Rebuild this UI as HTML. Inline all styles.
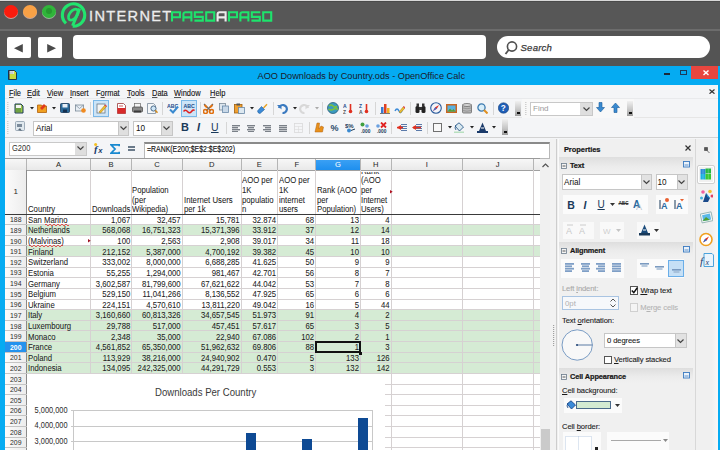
<!DOCTYPE html>
<html><head><meta charset="utf-8">
<style>
*{box-sizing:border-box}
html,body{margin:0;padding:0}
body{width:720px;height:450px;overflow:hidden;position:relative;font-family:"Liberation Sans",sans-serif;background:#fff;color:#1a1a1a}
.a{position:absolute}
#frame{left:0;top:0;width:720px;height:66px;background:#575757}
.tl{position:absolute;width:14px;height:14px;border-radius:50%}
.btn{position:absolute;background:#fff;border-radius:2px}
#blue{left:0;top:65.7px;width:720px;height:384.3px;background:#05abf2}
#app{left:5px;top:85px;width:713px;height:365px;background:#f4f5f7}
.menu{position:absolute;top:87.8px;font-size:9.1px;color:#111;white-space:nowrap;line-height:10px;transform:scaleX(0.82);transform-origin:0 0;-webkit-text-stroke:0.12px #111}
.menu u{text-decoration:underline;text-decoration-color:#555;text-decoration-thickness:0.7px;text-underline-offset:0.6px}
</style></head><body>
<div id="frame" class="a">
  <div class="a" style="left:0;top:0;width:720px;height:1px;background:#d8d8d8"></div>
  <div class="a" style="left:0;top:1px;width:720px;height:1px;background:#4a4a4a"></div>
  <div class="tl" style="left:4px;top:5px;width:14px;height:13px;background:#fb1c0e;box-shadow:0 1px 0 #c9a09a"></div>
  <div class="tl" style="left:23px;top:5px;width:14px;height:13px;background:#f8a146;box-shadow:0 1px 0 #c9a89a"></div>
  <div class="tl" style="left:42px;top:5px;width:14px;height:13px;background:#30b53a;box-shadow:0 1px 0 #9ab89a"></div>
  <div class="tl" style="left:46px;top:8px;width:6px;height:6px;background:#269a30"></div>
  <svg class="a" style="left:56px;top:0px" width="34" height="30" viewBox="0 0 34 30">
    <path d="M10 23.3 A11.2 11.2 0 1 1 16.7 26.2" fill="none" stroke="#22e46e" stroke-width="3.1"/>
    <ellipse cx="17.3" cy="14.6" rx="6.3" ry="3.7" transform="rotate(-52 17.3 14.6)" fill="none" stroke="#22e46e" stroke-width="2.7"/>
    <path d="M23.6 8.6 L16.6 25.8" fill="none" stroke="#22e46e" stroke-width="3"/>
  </svg>
  <div class="a" style="left:89px;top:8px;font-size:14.6px;letter-spacing:1.33px;color:#ececec;-webkit-text-stroke:0.3px;white-space:nowrap;line-height:16px">INTERNET</div>
  <svg class="a" style="left:170.6px;top:10.6px" width="104" height="11" viewBox="0 0 104 10.6"><path transform="translate(0.00 0)" d="M1 10.4 V1 H9 V6 H1" fill="none" stroke="#1ee36c" stroke-width="2.1" stroke-linejoin="miter"/><path transform="translate(11.40 0)" d="M1 10.4 V3 Q1 1 3 1 H9 V10.4 M1 6.2 H9" fill="none" stroke="#1ee36c" stroke-width="2.1" stroke-linejoin="miter"/><path transform="translate(22.80 0)" d="M9.4 1 H1 V5.7 H9 V9.4 H0.6" fill="none" stroke="#1ee36c" stroke-width="2.1" stroke-linejoin="miter"/><path transform="translate(34.20 0)" d="M1 1 H9 V9.4 H1 Z" fill="none" stroke="#1ee36c" stroke-width="2.1" stroke-linejoin="miter"/><path transform="translate(45.60 0)" d="M1 10.4 V3 Q1 1 3 1 H9 V10.4 M1 6.2 H9" fill="none" stroke="#ececec" stroke-width="2.1" stroke-linejoin="miter"/><path transform="translate(57.00 0)" d="M1 10.4 V1 H9 V6 H1" fill="none" stroke="#1ee36c" stroke-width="2.1" stroke-linejoin="miter"/><path transform="translate(68.40 0)" d="M1 10.4 V3 Q1 1 3 1 H9 V10.4 M1 6.2 H9" fill="none" stroke="#1ee36c" stroke-width="2.1" stroke-linejoin="miter"/><path transform="translate(79.80 0)" d="M9.4 1 H1 V5.7 H9 V9.4 H0.6" fill="none" stroke="#1ee36c" stroke-width="2.1" stroke-linejoin="miter"/><path transform="translate(91.20 0)" d="M1 1 H9 V9.4 H1 Z" fill="none" stroke="#1ee36c" stroke-width="2.1" stroke-linejoin="miter"/></svg>
  <div class="a" style="left:0;top:29px;width:720px;height:1.6px;background:#6c6c6c"></div>
  <div class="a" style="left:0;top:31px;width:720px;height:35px;background:#545454"></div>
  <div class="btn" style="left:7px;top:37.4px;width:24.3px;height:21px"></div>
  <svg class="a" style="left:13.5px;top:44px" width="10" height="9"><path d="M0 4.2 L8.8 0 L8.8 8.4 Z" fill="#4a4a4a"/></svg>
  <div class="btn" style="left:37.8px;top:37.4px;width:24.5px;height:21px"></div>
  <svg class="a" style="left:46.7px;top:43.8px" width="10" height="9"><path d="M9 4.2 L0.2 0 L0.2 8.4 Z" fill="#4a4a4a"/></svg>
  <div class="btn" style="left:72.5px;top:35.3px;width:413.3px;height:23.6px;border-radius:4px"></div>
  <div class="btn" style="left:497px;top:36px;width:213px;height:22px;border-radius:11px"></div>
  <svg class="a" style="left:503px;top:40px" width="16" height="16"><circle cx="9" cy="6.5" r="4.6" fill="none" stroke="#505050" stroke-width="1.6"/><path d="M5.8 9.8 L2.5 14" stroke="#505050" stroke-width="1.8"/></svg>
  <div class="a" style="left:520.5px;top:41.5px;font-size:9.6px;font-style:italic;color:#3a3a3a;line-height:12px;-webkit-text-stroke:0.25px #3a3a3a;letter-spacing:0.2px">Search</div>
</div>
<div id="blue" class="a"></div>
<!-- title bar -->
<svg class="a" style="left:8px;top:70px" width="9" height="10" viewBox="0 0 9 10"><path d="M0.5 0.5 H6.5 L8.5 2.5 V9.5 H0.5z" fill="#c8dc40" stroke="#1a2a4a" stroke-width="0.9"/><path d="M1 1 H6 V4 H1z" fill="#f4f4f4"/><path d="M1.5 2h4M1.5 3.2h4" stroke="#8a9aaa" stroke-width="0.6"/><rect x="0.3" y="0.5" width="1.2" height="9" fill="#1a2a4a"/></svg>
<div class="a" style="left:257.5px;top:70px;font-size:9.2px;color:#1a1a2a;white-space:nowrap;line-height:12px">AOO Downloads by Country.ods - OpenOffice Calc</div>
<div class="a" style="left:664px;top:73.4px;width:5.5px;height:1.8px;background:#1a2a3a"></div>
<div class="a" style="left:680px;top:70px;width:7px;height:5.4px;border:1px solid #1a3a5a;border-top-width:1.6px"></div>
<div class="a" style="left:691px;top:66px;width:27px;height:13px;background:#e8463f"></div>
<svg class="a" style="left:702.5px;top:70.3px" width="6" height="5.5"><path d="M0.5 0.5 L5.5 5 M5.5 0.5 L0.5 5" stroke="#fff" stroke-width="1.4"/></svg>
<div id="app" class="a"></div>
<div class="a" style="left:716.5px;top:85px;width:2px;height:365px;background:#f8f8f8"></div>
<div class="a" style="left:718.3px;top:85px;width:1.7px;height:365px;background:#05abf2"></div>
<!-- menu -->
<div class="menu" style="left:9px"><u>F</u>ile</div>
<div class="menu" style="left:27px"><u>E</u>dit</div>
<div class="menu" style="left:47px"><u>V</u>iew</div>
<div class="menu" style="left:70px"><u>I</u>nsert</div>
<div class="menu" style="left:96px">F<u>o</u>rmat</div>
<div class="menu" style="left:127px"><u>T</u>ools</div>
<div class="menu" style="left:152px"><u>D</u>ata</div>
<div class="menu" style="left:174px"><u>W</u>indow</div>
<div class="menu" style="left:210px"><u>H</u>elp</div>
<svg class="a" style="left:708.5px;top:89.3px" width="6" height="5.2"><path d="M0.5 0.5 L5.5 4.7 M5.5 0.5 L0.5 4.7" stroke="#333" stroke-width="1.2"/></svg>
<div class="a" style="left:5px;top:117px;width:713px;height:1px;background:#e6e6e6"></div>
<div class="a" style="left:5px;top:97.6px;width:713px;height:1px;background:#e9eaec"></div>
<div class="a" style="left:5px;top:136.8px;width:713px;height:1.6px;background:#d2d2d2"></div>
<svg class="a" style="left:7px;top:102px" width="2" height="13" viewBox="0 0 2 13"><rect x="0" y="0" width="1.5" height="1" fill="#cfcfcf"/><rect x="0" y="2" width="1.5" height="1" fill="#cfcfcf"/><rect x="0" y="4" width="1.5" height="1" fill="#cfcfcf"/><rect x="0" y="6" width="1.5" height="1" fill="#cfcfcf"/><rect x="0" y="8" width="1.5" height="1" fill="#cfcfcf"/><rect x="0" y="10" width="1.5" height="1" fill="#cfcfcf"/><rect x="0" y="12" width="1.5" height="1" fill="#cfcfcf"/></svg>
<svg class="a" style="left:14px;top:103px" width="10" height="11" viewBox="0 0 10 11"><path d="M1 1h6l2 2v7H1z" fill="#9bc84a" stroke="#1d3a5a" stroke-width="1"/><rect x="2" y="2" width="5" height="3" fill="#f4f4f4"/><path d="M2 6h5M2 8h5" stroke="#2d6a3a" stroke-width="0.8"/></svg>
<svg class="a" style="left:29.5px;top:107px" width="4" height="2.5" viewBox="0 0 4 2.5"><path d="M0 0 L4 0 L2 2.5 Z" fill="#222"/></svg>
<svg class="a" style="left:37px;top:103px" width="10" height="10" viewBox="0 0 10 10"><path d="M0.5 2h4l1 1h4v6.5h-9z" fill="#f0a020" stroke="#b0600a" stroke-width="0.8"/><path d="M3 5l4-4 2 2-4 4z" fill="#e03a1a"/></svg>
<svg class="a" style="left:51.5px;top:107px" width="4" height="2.5" viewBox="0 0 4 2.5"><path d="M0 0 L4 0 L2 2.5 Z" fill="#222"/></svg>
<svg class="a" style="left:60px;top:103px" width="10" height="10" viewBox="0 0 10 10"><rect x="0.5" y="0.5" width="9" height="9" rx="1" fill="#2a6a9a" stroke="#1a3a5a" stroke-width="0.8"/><rect x="2.5" y="1" width="5" height="3.5" fill="#e8f0f8"/><rect x="3" y="6.5" width="4" height="3" fill="#153050"/></svg>
<svg class="a" style="left:75px;top:104px" width="11" height="9" viewBox="0 0 11 9"><rect x="0.5" y="1" width="8" height="6" fill="#e8eef4" stroke="#7a8a9a" stroke-width="0.8"/><path d="M0.5 1 L4.5 4.5 L8.5 1" fill="none" stroke="#7a8a9a" stroke-width="0.7"/><circle cx="8.5" cy="6.5" r="2.3" fill="#f08a20"/></svg>
<div class="a" style="left:90px;top:102px;width:1px;height:13px;background:#d6d6d6"></div>
<div class="a" style="left:93px;top:100px;width:16px;height:17px;background:#cce4f7;border:1px solid #7ab8e8"></div>
<svg class="a" style="left:96px;top:103px" width="11" height="11" viewBox="0 0 11 11"><rect x="1" y="1" width="8" height="9" fill="#f4f4f4" stroke="#6a7a8a" stroke-width="0.8"/><path d="M3 9 L9 2 L10.5 3.5 L4.5 10z" fill="#f0c030" stroke="#a07010" stroke-width="0.5"/><path d="M9 2l1.5 1.5" stroke="#e04060" stroke-width="1.2"/></svg>
<svg class="a" style="left:117px;top:103px" width="9" height="11" viewBox="0 0 9 11"><path d="M0.5 0.5h6l2 2v8h-8z" fill="#fff" stroke="#9a3a3a" stroke-width="0.8"/><rect x="0.5" y="5" width="8" height="5.5" fill="#d82a2a"/><path d="M2 3h4" stroke="#c03030" stroke-width="0.8"/></svg>
<svg class="a" style="left:132px;top:103px" width="11" height="10" viewBox="0 0 11 10"><rect x="2.5" y="0.5" width="6" height="4" fill="#f4f4f4" stroke="#6a6a6a" stroke-width="0.7"/><rect x="0.5" y="4" width="10" height="5" rx="1" fill="#8a8a8a" stroke="#444" stroke-width="0.7"/><rect x="2" y="7.5" width="7" height="2" fill="#3a3a3a"/></svg>
<svg class="a" style="left:147px;top:103px" width="11" height="11" viewBox="0 0 11 11"><path d="M0.5 0.5h6l2 2v8h-8z" fill="#f4f6f8" stroke="#7a8a9a" stroke-width="0.8"/><circle cx="6.5" cy="5.5" r="2.6" fill="#cfe6f7" stroke="#4a6a8a" stroke-width="1"/><path d="M8.3 7.3 L10.5 9.8" stroke="#d08a20" stroke-width="1.6"/></svg>
<div class="a" style="left:162px;top:102px;width:1px;height:13px;background:#d6d6d6"></div>
<svg class="a" style="left:167px;top:103px" width="12" height="11" viewBox="0 0 12 11"><text x="0" y="5" font-size="5.2" font-weight="bold" fill="#1a4a8a" font-family="Liberation Sans">ABC</text><path d="M3 6.5 L6 9.5 L11 3.5" fill="none" stroke="#3a8ad0" stroke-width="2"/></svg>
<div class="a" style="left:181px;top:100px;width:16px;height:17px;background:#cce4f7;border:1px solid #7ab8e8"></div>
<svg class="a" style="left:183px;top:103px" width="12" height="11" viewBox="0 0 12 11"><text x="0.5" y="5" font-size="5.2" font-weight="bold" fill="#1a4a8a" font-family="Liberation Sans">ABC</text><path d="M0.5 8.5 Q2.5 6 4.5 8.5 T8.5 8.5 T11.5 7.5" fill="none" stroke="#e02020" stroke-width="1.5"/></svg>
<div class="a" style="left:200px;top:102px;width:1px;height:13px;background:#d6d6d6"></div>
<svg class="a" style="left:203px;top:103px" width="11" height="11" viewBox="0 0 11 11"><path d="M1 1 L8 8 M10 1 L3 8" stroke="#6a6a6a" stroke-width="1.2"/><circle cx="2.5" cy="8.5" r="2" fill="none" stroke="#e07010" stroke-width="1.6"/><circle cx="8.5" cy="8.5" r="2" fill="none" stroke="#e07010" stroke-width="1.6"/><path d="M4 4.5L1.5 2 M7 4.5 L9.5 2" stroke="#e07010" stroke-width="1.8"/></svg>
<svg class="a" style="left:219px;top:103px" width="10" height="10" viewBox="0 0 10 10"><rect x="0.5" y="0.5" width="6" height="6.5" fill="#dde6ee" stroke="#7a8a9a" stroke-width="0.8"/><rect x="3.5" y="3" width="6" height="6.5" fill="#c8d8e8" stroke="#6a8aaa" stroke-width="0.8"/></svg>
<svg class="a" style="left:234px;top:103px" width="11" height="11" viewBox="0 0 11 11"><rect x="0.5" y="1.5" width="7.5" height="8.5" fill="#f0a030" stroke="#a06010" stroke-width="0.8"/><rect x="2.5" y="0.5" width="3.5" height="2" fill="#555"/><rect x="4.5" y="4.5" width="6" height="6" fill="#dde8f0" stroke="#6a8aaa" stroke-width="0.8"/></svg>
<svg class="a" style="left:249.5px;top:107px" width="4" height="2.5" viewBox="0 0 4 2.5"><path d="M0 0 L4 0 L2 2.5 Z" fill="#222"/></svg>
<svg class="a" style="left:257px;top:103px" width="11" height="11" viewBox="0 0 11 11"><path d="M0.5 8 L4.5 3.5 L7.5 6.5 L3 10.5 Q1 10.5 0.5 8z" fill="#3a8ad8" stroke="#1a5a9a" stroke-width="0.6"/><path d="M6 4.5 L9.5 0.8 L10.5 1.8 L7 5.5z" fill="#e8a020"/></svg>
<div class="a" style="left:273px;top:102px;width:1px;height:13px;background:#d6d6d6"></div>
<svg class="a" style="left:277px;top:103px" width="11" height="11" viewBox="0 0 11 11"><path d="M2 5 A4 4 0 1 1 5.5 10" fill="none" stroke="#3a7ac0" stroke-width="2.2"/><path d="M0 2 L4.5 2 L4.5 6.5z" fill="#3a7ac0"/></svg>
<svg class="a" style="left:292.5px;top:107px" width="4" height="2.5" viewBox="0 0 4 2.5"><path d="M0 0 L4 0 L2 2.5 Z" fill="#222"/></svg>
<svg class="a" style="left:299px;top:103px" width="11" height="11" viewBox="0 0 11 11"><path d="M9 5 A4 4 0 1 0 5.5 10" fill="none" stroke="#d8d8d8" stroke-width="2.2"/><path d="M11 2 L6.5 2 L6.5 6.5z" fill="#d8d8d8"/></svg>
<svg class="a" style="left:314.5px;top:107px" width="4" height="2.5" viewBox="0 0 4 2.5"><path d="M0 0 L4 0 L2 2.5 Z" fill="#aaa"/></svg>
<div class="a" style="left:322px;top:102px;width:1px;height:13px;background:#d6d6d6"></div>
<svg class="a" style="left:327px;top:102px" width="12" height="12" viewBox="0 0 12 12"><circle cx="6" cy="6" r="5.5" fill="#3a9ac0" stroke="#2a5a7a" stroke-width="0.8"/><path d="M2 4 Q4 2 6 4 T10 4 M1.5 7 Q4 9 7 7 T10.5 8" fill="none" stroke="#7ac040" stroke-width="1.6"/></svg>
<svg class="a" style="left:343px;top:103px" width="11" height="11" viewBox="0 0 11 11"><text x="0" y="4.5" font-size="5" font-weight="bold" fill="#1a4a8a" font-family="Liberation Sans">A</text><text x="0" y="10.5" font-size="5" font-weight="bold" fill="#555" font-family="Liberation Sans">Z</text><path d="M7.5 1 V8" stroke="#e03020" stroke-width="1.6"/><circle cx="7.5" cy="8.5" r="1.8" fill="#e03020"/></svg>
<svg class="a" style="left:359px;top:103px" width="11" height="11" viewBox="0 0 11 11"><text x="0" y="4.5" font-size="5" font-weight="bold" fill="#1a4a8a" font-family="Liberation Sans">Z</text><text x="0" y="10.5" font-size="5" font-weight="bold" fill="#555" font-family="Liberation Sans">A</text><path d="M7.5 1 V8" stroke="#e03020" stroke-width="1.6"/><circle cx="7.5" cy="8.5" r="1.8" fill="#e03020"/></svg>
<div class="a" style="left:375px;top:102px;width:1px;height:13px;background:#d6d6d6"></div>
<svg class="a" style="left:380px;top:103px" width="10" height="11" viewBox="0 0 10 11"><rect x="0" y="10" width="10" height="1" fill="#777"/><rect x="1" y="4" width="2.5" height="6" fill="#3a7ad0"/><rect x="4" y="1" width="2.5" height="9" fill="#e04020"/><rect x="7" y="5" width="2.5" height="5" fill="#f0b020"/></svg>
<svg class="a" style="left:394px;top:104px" width="11" height="10" viewBox="0 0 11 10"><path d="M1 7 Q3 3 5 7 T9 4" fill="none" stroke="#3a8ad8" stroke-width="1.4"/><path d="M5 8 L9.5 2.5 L11 4 L6.5 9z" fill="#f0c030" stroke="#b08010" stroke-width="0.5"/><path d="M9.5 2.5 L11 4" stroke="#e04060" stroke-width="1.2"/></svg>
<div class="a" style="left:410px;top:102px;width:1px;height:13px;background:#d6d6d6"></div>
<svg class="a" style="left:415px;top:103px" width="11" height="10" viewBox="0 0 11 10"><rect x="0.5" y="3" width="4" height="7" rx="1.5" fill="#222"/><rect x="6.5" y="3" width="4" height="7" rx="1.5" fill="#222"/><rect x="1.5" y="0.5" width="2.5" height="3" fill="#333"/><rect x="7" y="0.5" width="2.5" height="3" fill="#333"/><rect x="4" y="4" width="3" height="3" fill="#333"/></svg>
<svg class="a" style="left:430px;top:102px" width="12" height="12" viewBox="0 0 12 12"><circle cx="6" cy="6" r="5.3" fill="#f4f4f8" stroke="#2a5a9a" stroke-width="1.1"/><path d="M9 3 L6.8 6.8 L3 9 L5.2 5.2z" fill="#e03020"/><path d="M6.8 6.8 L3 9 L5.2 5.2z" fill="#3a6ad0"/></svg>
<svg class="a" style="left:446px;top:104px" width="11" height="9" viewBox="0 0 11 9"><rect x="0" y="0" width="11" height="9" fill="#c86420"/><rect x="1.5" y="1.5" width="8" height="6" fill="#58b0e0"/><path d="M1.5 7.5 L4 4.5 L6 6.5 L7.5 5 L9.5 7.5z" fill="#58a030"/></svg>
<svg class="a" style="left:462px;top:103px" width="10" height="11" viewBox="0 0 10 11"><rect x="0.5" y="1.5" width="9" height="8.5" rx="1" fill="#b8b8b8" stroke="#6a6a6a" stroke-width="0.8"/><ellipse cx="5" cy="2" rx="4.5" ry="1.5" fill="#d8d8d8" stroke="#6a6a6a" stroke-width="0.8"/><path d="M1 5 Q5 6.5 9 5 M1 7.5 Q5 9 9 7.5" fill="none" stroke="#888" stroke-width="0.7"/></svg>
<svg class="a" style="left:477px;top:103px" width="11" height="11" viewBox="0 0 11 11"><circle cx="4.5" cy="4.5" r="3.6" fill="#d8eefa" stroke="#3a7ab0" stroke-width="1.3"/><path d="M7 7 L10.5 10.5" stroke="#e09020" stroke-width="2"/></svg>
<div class="a" style="left:493px;top:102px;width:1px;height:13px;background:#d6d6d6"></div>
<svg class="a" style="left:498px;top:102px" width="11" height="12" viewBox="0 0 11 12"><circle cx="5.5" cy="6" r="5.2" fill="#1f5fb8" stroke="#14407a" stroke-width="0.6"/><text x="2.7" y="9.2" font-size="8.2" font-weight="bold" fill="#fff" font-family="Liberation Sans">?</text></svg>
<div class="a" style="left:515px;top:101px;width:6px;height:15px;background:linear-gradient(#f0f0f0,#c4c4c4 60%,#9a9a9a)"></div>
<div class="a" style="left:517px;top:112px;width:3px;height:2px;background:#111"></div>
<div class="a" style="left:522px;top:99px;width:112px;height:19px;background:#f8f8f8"></div>
<svg class="a" style="left:525px;top:102px" width="2" height="13" viewBox="0 0 2 13"><rect x="0" y="0" width="1.5" height="1" fill="#cfcfcf"/><rect x="0" y="2" width="1.5" height="1" fill="#cfcfcf"/><rect x="0" y="4" width="1.5" height="1" fill="#cfcfcf"/><rect x="0" y="6" width="1.5" height="1" fill="#cfcfcf"/><rect x="0" y="8" width="1.5" height="1" fill="#cfcfcf"/><rect x="0" y="10" width="1.5" height="1" fill="#cfcfcf"/><rect x="0" y="12" width="1.5" height="1" fill="#cfcfcf"/></svg>
<div class="a" style="left:530px;top:102px;width:63px;height:14px;background:#fff;border:1px solid #c8c8c8"></div>
<div class="a" style="left:580px;top:103px;width:12px;height:12px;background:#dedede"></div>
<svg class="a" style="left:583px;top:107px" width="7" height="5" viewBox="0 0 7 5"><path d="M0.5 0.5 L3.5 3.5 L6.5 0.5" fill="none" stroke="#444" stroke-width="1.2"/></svg>
<div class="a" style="left:533px;top:104px;font-size:8px;color:#9a9a9a;line-height:10px">Find</div>
<svg class="a" style="left:596px;top:102px" width="9" height="11" viewBox="0 0 9 11"><path d="M3 0.5h3v5h2.5L4.5 10 0.5 5.5H3z" fill="#3a8ad0" stroke="#1a5a9a" stroke-width="0.6"/></svg>
<svg class="a" style="left:611px;top:102px" width="9" height="11" viewBox="0 0 9 11"><path d="M3 10.5h3v-5h2.5L4.5 1 0.5 5.5H3z" fill="#3a8ad0" stroke="#1a5a9a" stroke-width="0.6"/></svg>
<div class="a" style="left:627px;top:101px;width:6px;height:15px;background:linear-gradient(#f0f0f0,#c4c4c4 60%,#9a9a9a)"></div>
<div class="a" style="left:629px;top:112px;width:3px;height:2px;background:#111"></div>
<svg class="a" style="left:7px;top:121px" width="2" height="13" viewBox="0 0 2 13"><rect x="0" y="0" width="1.5" height="1" fill="#cfcfcf"/><rect x="0" y="2" width="1.5" height="1" fill="#cfcfcf"/><rect x="0" y="4" width="1.5" height="1" fill="#cfcfcf"/><rect x="0" y="6" width="1.5" height="1" fill="#cfcfcf"/><rect x="0" y="8" width="1.5" height="1" fill="#cfcfcf"/><rect x="0" y="10" width="1.5" height="1" fill="#cfcfcf"/><rect x="0" y="12" width="1.5" height="1" fill="#cfcfcf"/></svg>
<svg class="a" style="left:15px;top:121px" width="10" height="11" viewBox="0 0 10 11"><rect x="0.5" y="0.5" width="9" height="9" rx="1" fill="#e0e8ee" stroke="#8a9aaa" stroke-width="0.8"/><rect x="2" y="3" width="5" height="3" fill="#7a8a9a"/><path d="M3 9 L5 7 L7 10" fill="#5a6a7a"/></svg>
<div class="a" style="left:33px;top:121px;width:96px;height:15px;background:#fff;border:1px solid #c6c6c6"></div>
<div class="a" style="left:118px;top:122px;width:10px;height:13px;background:#dfdfdf;border-left:1px solid #c6c6c6"></div>
<svg class="a" style="left:120px;top:126px" width="7" height="5" viewBox="0 0 7 5"><path d="M0.5 0.5 L3.5 3.5 L6.5 0.5" fill="none" stroke="#444" stroke-width="1.2"/></svg>
<div class="a" style="left:36px;top:123px;font-size:8.2px;color:#111;line-height:11px">Arial</div>
<div class="a" style="left:133px;top:121px;width:40px;height:15px;background:#fff;border:1px solid #c6c6c6"></div>
<div class="a" style="left:161px;top:122px;width:11px;height:13px;background:#dfdfdf;border-left:1px solid #c6c6c6"></div>
<svg class="a" style="left:163px;top:126px" width="7" height="5" viewBox="0 0 7 5"><path d="M0.5 0.5 L3.5 3.5 L6.5 0.5" fill="none" stroke="#444" stroke-width="1.2"/></svg>
<div class="a" style="left:136px;top:123px;font-size:8.2px;color:#111;line-height:11px">10</div>
<div class="a" style="left:181px;top:121px;font-size:11px;font-weight:bold;color:#1a3a5a;line-height:13px">B</div>
<div class="a" style="left:197px;top:121px;font-size:11px;font-style:italic;font-weight:bold;color:#1a3a5a;line-height:13px">I</div>
<div class="a" style="left:211px;top:121px;font-size:10.5px;color:#1a3a5a;line-height:13px;text-decoration:underline">U</div>
<div class="a" style="left:226px;top:122px;width:1px;height:12px;background:#d6d6d6"></div>
<svg class="a" style="left:232px;top:124.5px" width="8" height="7.5" viewBox="0 0 8 7.5"><rect x="0" y="0" width="8" height="1.4" fill="#7a8088"/><rect x="0" y="2" width="6" height="1.4" fill="#7a8088"/><rect x="0" y="4" width="8" height="1.4" fill="#7a8088"/><rect x="0" y="6" width="6" height="1.4" fill="#7a8088"/></svg>
<svg class="a" style="left:247px;top:124.5px" width="8" height="7.5" viewBox="0 0 8 7.5"><rect x="0.0" y="0" width="8" height="1.4" fill="#7a8088"/><rect x="1.0" y="2" width="6" height="1.4" fill="#7a8088"/><rect x="0.0" y="4" width="8" height="1.4" fill="#7a8088"/><rect x="1.0" y="6" width="6" height="1.4" fill="#7a8088"/></svg>
<svg class="a" style="left:263px;top:124.5px" width="8" height="7.5" viewBox="0 0 8 7.5"><rect x="0" y="0" width="8" height="1.4" fill="#7a8088"/><rect x="2" y="2" width="6" height="1.4" fill="#7a8088"/><rect x="0" y="4" width="8" height="1.4" fill="#7a8088"/><rect x="2" y="6" width="6" height="1.4" fill="#7a8088"/></svg>
<svg class="a" style="left:279px;top:124.5px" width="8" height="7.5" viewBox="0 0 8 7.5"><rect x="0" y="0" width="8" height="1.4" fill="#7a8088"/><rect x="0" y="2" width="8" height="1.4" fill="#7a8088"/><rect x="0" y="4" width="8" height="1.4" fill="#7a8088"/><rect x="0" y="6" width="8" height="1.4" fill="#7a8088"/></svg>
<svg class="a" style="left:294px;top:123px" width="9" height="10" viewBox="0 0 9 10"><rect x="0.5" y="0.5" width="8" height="9" fill="none" stroke="#dadada" stroke-width="0.8"/><path d="M0.5 3.5h8M0.5 6.5h8M4.5 3.5v6" stroke="#dadada" stroke-width="0.6"/></svg>
<div class="a" style="left:309px;top:122px;width:1px;height:12px;background:#d6d6d6"></div>
<svg class="a" style="left:314px;top:122px" width="10" height="11" viewBox="0 0 10 11"><path d="M1 10 L3 1 L5.5 1 L5 7 L7 4 L9.5 5 L8.5 10z" fill="#e8901a" stroke="#b06010" stroke-width="0.5"/></svg>
<div class="a" style="left:330.5px;top:122.5px;font-size:9px;font-weight:bold;color:#2a4a6a;line-height:11px">%</div>
<svg class="a" style="left:345px;top:122px" width="11" height="11" viewBox="0 0 11 11"><text x="0" y="5.5" font-size="6" font-weight="bold" fill="#1a3a5a" font-family="Liberation Sans">$%</text><circle cx="4" cy="8.5" r="2" fill="#3a8ad0"/><path d="M6 8.5 L10 7" stroke="#1a3a5a" stroke-width="1"/></svg>
<svg class="a" style="left:360px;top:122px" width="11" height="11" viewBox="0 0 11 11"><circle cx="2.5" cy="2.5" r="2" fill="#40a040"/><circle cx="7" cy="4" r="1.8" fill="#6aa0e0"/><text x="1" y="10.5" font-size="4.8" font-weight="bold" fill="#1a3a5a" font-family="Liberation Sans">.000</text></svg>
<svg class="a" style="left:376px;top:122px" width="11" height="11" viewBox="0 0 11 11"><circle cx="2" cy="4" r="1.8" fill="#6aa0e0"/><path d="M5 0.5 L10 5.5 M10 0.5 L5 5.5" stroke="#e02020" stroke-width="1.8"/><text x="1" y="10.5" font-size="4.8" font-weight="bold" fill="#1a3a5a" font-family="Liberation Sans">.000</text></svg>
<div class="a" style="left:391px;top:122px;width:1px;height:12px;background:#d6d6d6"></div>
<svg class="a" style="left:397px;top:123px" width="10" height="9" viewBox="0 0 10 9"><path d="M4 1.5h6M4 3.5h6M4 5.5h6M4 7.5h6" stroke="#5a7aaa" stroke-width="1"/><path d="M0 4.5 L4 2 L4 7z" fill="#e03020"/><rect x="0" y="3.8" width="6" height="1.6" fill="#e03020"/></svg>
<svg class="a" style="left:412px;top:123px" width="10" height="9" viewBox="0 0 10 9"><path d="M4 1.5h6M4 3.5h6M4 5.5h6M4 7.5h6" stroke="#5a7aaa" stroke-width="1"/><path d="M0 4.5 L4 2 L4 7z" fill="#e03020"/><rect x="1" y="3.8" width="8" height="1.6" fill="#e03020"/></svg>
<div class="a" style="left:427px;top:122px;width:1px;height:12px;background:#d6d6d6"></div>
<svg class="a" style="left:433px;top:123px" width="9" height="9" viewBox="0 0 9 9"><rect x="0.5" y="0.5" width="8" height="8" fill="#f8f8f8" stroke="#707070" stroke-width="1"/></svg>
<svg class="a" style="left:447.5px;top:126px" width="4" height="2.5" viewBox="0 0 4 2.5"><path d="M0 0 L4 0 L2 2.5 Z" fill="#222"/></svg>
<svg class="a" style="left:454px;top:122px" width="11" height="11" viewBox="0 0 11 11"><path d="M1 4 L5 0.8 L9.5 5 L5.5 9z" fill="#d8e8f0" stroke="#2a5a8a" stroke-width="0.9"/><path d="M2 3.5 Q0 6 2 8" fill="none" stroke="#2a5a8a" stroke-width="0.9"/><rect x="0" y="9.5" width="10" height="1.5" fill="#b8e0c0"/></svg>
<svg class="a" style="left:469.5px;top:126px" width="4" height="2.5" viewBox="0 0 4 2.5"><path d="M0 0 L4 0 L2 2.5 Z" fill="#222"/></svg>
<svg class="a" style="left:477px;top:122px" width="11" height="11" viewBox="0 0 11 11"><path d="M2 9 L5.5 0.5 L9 9z" fill="#1a3a6a"/><path d="M4 6h3" stroke="#fff" stroke-width="1"/><rect x="0" y="9" width="11" height="2" fill="#1a3a6a"/></svg>
<svg class="a" style="left:491.5px;top:126px" width="4" height="2.5" viewBox="0 0 4 2.5"><path d="M0 0 L4 0 L2 2.5 Z" fill="#222"/></svg>
<div class="a" style="left:502px;top:119px;width:6px;height:16px;background:linear-gradient(#f0f0f0,#c4c4c4 60%,#9a9a9a)"></div>
<div class="a" style="left:504px;top:131px;width:3px;height:2px;background:#111"></div>
<div class="a" style="left:8.75px;top:141.60px;width:77.75px;height:14.30px;background:#fff;border:1px solid #c9c9c9"></div>
<div class="a" style="left:75.00px;top:142.60px;width:10.50px;height:12.30px;background:#dedede"></div>
<svg class="a" style="left:77px;top:146px" width="7" height="5"><path d="M0.5 0.5 L3.5 3.5 L6.5 0.5" fill="none" stroke="#444" stroke-width="1.2"/></svg>
<div class="a" style="left:11.80px;top:143.90px;white-space:nowrap;font-size:8.2px;color:#333;line-height:10px;transform:scaleX(0.92);transform-origin:0 0">G200</div>
<svg class="a" style="left:93px;top:142px" width="12" height="12" viewBox="0 0 12 12"><circle cx="2.6" cy="2.4" r="1.5" fill="#f4c020"/><text x="1" y="10.8" font-size="10.5" font-style="italic" font-weight="bold" fill="#1a3a6a" font-family="Liberation Serif">f</text><text x="5.3" y="10.8" font-size="7.5" font-style="italic" font-weight="bold" fill="#1a3a6a" font-family="Liberation Sans">x</text></svg>
<svg class="a" style="left:109.5px;top:143.5px" width="10" height="10" viewBox="0 0 10 10"><path d="M9.3 2.2 V0.8 H1 L5 5 L1 9.2 H9.3 V7.8" fill="none" stroke="#1a8ad0" stroke-width="1.8"/></svg>
<div class="a" style="left:127.50px;top:146.20px;width:7.00px;height:1.40px;background:#6a7a8a"></div>
<div class="a" style="left:127.50px;top:149.20px;width:7.00px;height:1.40px;background:#6a7a8a"></div>
<div class="a" style="left:143.75px;top:141.50px;width:406.25px;height:17.00px;background:#fff;border:1px solid #b8b8b8;border-top:2px solid #8a8a8a"></div>
<div class="a" style="left:146.70px;top:144.20px;white-space:nowrap;font-size:8.3px;color:#111;line-height:10px;transform:scaleX(0.835);transform-origin:0 0;-webkit-text-stroke:0.15px #111">=RANK(E200;$E$2:$E$202)</div>
<div class="a" style="left:5.00px;top:158.60px;width:535.00px;height:291.40px;background:#fff"></div>
<div class="a" style="left:5.00px;top:158.60px;width:535.00px;height:11.80px;background:linear-gradient(#f7f7f7,#e9e9e9)"></div>
<div class="a" style="left:5.00px;top:158.00px;width:535.00px;height:0.80px;background:#9a9a9a"></div>
<div class="a" style="left:5.00px;top:169.90px;width:535.00px;height:1.00px;background:#a0a0a0"></div>
<div class="a" style="left:26.60px;top:160.20px;white-space:nowrap;width:63.90px;text-align:center;font-size:7.6px;line-height:9px;color:#2a2a2a;-webkit-text-stroke:0.05px #2a2a2a">A</div>
<div class="a" style="left:90.50px;top:160.20px;white-space:nowrap;width:40.90px;text-align:center;font-size:7.6px;line-height:9px;color:#2a2a2a;-webkit-text-stroke:0.05px #2a2a2a">B</div>
<div class="a" style="left:131.40px;top:160.20px;white-space:nowrap;width:51.30px;text-align:center;font-size:7.6px;line-height:9px;color:#2a2a2a;-webkit-text-stroke:0.05px #2a2a2a">C</div>
<div class="a" style="left:182.70px;top:160.20px;white-space:nowrap;width:58.30px;text-align:center;font-size:7.6px;line-height:9px;color:#2a2a2a;-webkit-text-stroke:0.05px #2a2a2a">D</div>
<div class="a" style="left:241.00px;top:160.20px;white-space:nowrap;width:36.80px;text-align:center;font-size:7.6px;line-height:9px;color:#2a2a2a;-webkit-text-stroke:0.05px #2a2a2a">E</div>
<div class="a" style="left:277.80px;top:160.20px;white-space:nowrap;width:37.80px;text-align:center;font-size:7.6px;line-height:9px;color:#2a2a2a;-webkit-text-stroke:0.05px #2a2a2a">F</div>
<div class="a" style="left:315.60px;top:159.50px;width:44.60px;height:10.60px;background:linear-gradient(#3aa0f4,#1e8fee)"></div>
<div class="a" style="left:315.60px;top:160.20px;white-space:nowrap;width:44.60px;text-align:center;font-size:7.6px;line-height:9px;color:#fff;-webkit-text-stroke:0.05px #fff">G</div>
<div class="a" style="left:360.20px;top:160.20px;white-space:nowrap;width:31.20px;text-align:center;font-size:7.6px;line-height:9px;color:#2a2a2a;-webkit-text-stroke:0.05px #2a2a2a">H</div>
<div class="a" style="left:391.40px;top:160.20px;white-space:nowrap;width:70.80px;text-align:center;font-size:7.6px;line-height:9px;color:#2a2a2a;-webkit-text-stroke:0.05px #2a2a2a">I</div>
<div class="a" style="left:462.20px;top:160.20px;white-space:nowrap;width:71.10px;text-align:center;font-size:7.6px;line-height:9px;color:#2a2a2a;-webkit-text-stroke:0.05px #2a2a2a">J</div>
<div class="a" style="left:5.00px;top:170.40px;width:21.60px;height:279.60px;background:linear-gradient(90deg,#fbfbfb,#ececec)"></div>
<div class="a" style="left:26.10px;top:158.60px;width:1.00px;height:11.80px;background:#b5b5b5"></div>
<div class="a" style="left:90.00px;top:158.60px;width:1.00px;height:11.80px;background:#b5b5b5"></div>
<div class="a" style="left:130.90px;top:158.60px;width:1.00px;height:11.80px;background:#b5b5b5"></div>
<div class="a" style="left:182.20px;top:158.60px;width:1.00px;height:11.80px;background:#b5b5b5"></div>
<div class="a" style="left:240.50px;top:158.60px;width:1.00px;height:11.80px;background:#b5b5b5"></div>
<div class="a" style="left:277.30px;top:158.60px;width:1.00px;height:11.80px;background:#b5b5b5"></div>
<div class="a" style="left:315.10px;top:158.60px;width:1.00px;height:11.80px;background:#b5b5b5"></div>
<div class="a" style="left:359.70px;top:158.60px;width:1.00px;height:11.80px;background:#b5b5b5"></div>
<div class="a" style="left:390.90px;top:158.60px;width:1.00px;height:11.80px;background:#b5b5b5"></div>
<div class="a" style="left:461.70px;top:158.60px;width:1.00px;height:11.80px;background:#b5b5b5"></div>
<div class="a" style="left:532.80px;top:158.60px;width:1.00px;height:11.80px;background:#b5b5b5"></div>
<div class="a" style="left:26.10px;top:170.40px;width:1.00px;height:279.60px;background:#8a8a8a"></div>
<div class="a" style="left:5.00px;top:187.30px;white-space:nowrap;width:21.60px;text-align:center;font-size:8px;line-height:9px;color:#2a2a2a">1</div>
<div class="a" style="left:27.10px;top:224.72px;width:512.90px;height:10.62px;background:#d5ebd4"></div>
<div class="a" style="left:27.10px;top:245.96px;width:512.90px;height:10.62px;background:#d5ebd4"></div>
<div class="a" style="left:27.10px;top:309.68px;width:512.90px;height:10.62px;background:#d5ebd4"></div>
<div class="a" style="left:27.10px;top:320.30px;width:512.90px;height:10.62px;background:#d5ebd4"></div>
<div class="a" style="left:27.10px;top:330.92px;width:512.90px;height:10.62px;background:#d5ebd4"></div>
<div class="a" style="left:27.10px;top:341.54px;width:512.90px;height:10.62px;background:#d5ebd4"></div>
<div class="a" style="left:27.10px;top:352.16px;width:512.90px;height:10.62px;background:#d5ebd4"></div>
<div class="a" style="left:27.10px;top:362.78px;width:512.90px;height:10.62px;background:#d5ebd4"></div>
<div class="a" style="left:26.60px;top:224.22px;width:513.40px;height:1.00px;background:#d6d1d2"></div>
<div class="a" style="left:5.00px;top:224.22px;width:21.60px;height:1.00px;background:#c4c4c4"></div>
<div class="a" style="left:26.60px;top:234.84px;width:513.40px;height:1.00px;background:#d6d1d2"></div>
<div class="a" style="left:5.00px;top:234.84px;width:21.60px;height:1.00px;background:#c4c4c4"></div>
<div class="a" style="left:26.60px;top:245.46px;width:513.40px;height:1.00px;background:#d6d1d2"></div>
<div class="a" style="left:5.00px;top:245.46px;width:21.60px;height:1.00px;background:#c4c4c4"></div>
<div class="a" style="left:26.60px;top:256.08px;width:513.40px;height:1.00px;background:#d6d1d2"></div>
<div class="a" style="left:5.00px;top:256.08px;width:21.60px;height:1.00px;background:#c4c4c4"></div>
<div class="a" style="left:26.60px;top:266.70px;width:513.40px;height:1.00px;background:#d6d1d2"></div>
<div class="a" style="left:5.00px;top:266.70px;width:21.60px;height:1.00px;background:#c4c4c4"></div>
<div class="a" style="left:26.60px;top:277.32px;width:513.40px;height:1.00px;background:#d6d1d2"></div>
<div class="a" style="left:5.00px;top:277.32px;width:21.60px;height:1.00px;background:#c4c4c4"></div>
<div class="a" style="left:26.60px;top:287.94px;width:513.40px;height:1.00px;background:#d6d1d2"></div>
<div class="a" style="left:5.00px;top:287.94px;width:21.60px;height:1.00px;background:#c4c4c4"></div>
<div class="a" style="left:26.60px;top:298.56px;width:513.40px;height:1.00px;background:#d6d1d2"></div>
<div class="a" style="left:5.00px;top:298.56px;width:21.60px;height:1.00px;background:#c4c4c4"></div>
<div class="a" style="left:26.60px;top:309.18px;width:513.40px;height:1.00px;background:#d6d1d2"></div>
<div class="a" style="left:5.00px;top:309.18px;width:21.60px;height:1.00px;background:#c4c4c4"></div>
<div class="a" style="left:26.60px;top:319.80px;width:513.40px;height:1.00px;background:#d6d1d2"></div>
<div class="a" style="left:5.00px;top:319.80px;width:21.60px;height:1.00px;background:#c4c4c4"></div>
<div class="a" style="left:26.60px;top:330.42px;width:513.40px;height:1.00px;background:#d6d1d2"></div>
<div class="a" style="left:5.00px;top:330.42px;width:21.60px;height:1.00px;background:#c4c4c4"></div>
<div class="a" style="left:26.60px;top:341.04px;width:513.40px;height:1.00px;background:#d6d1d2"></div>
<div class="a" style="left:5.00px;top:341.04px;width:21.60px;height:1.00px;background:#c4c4c4"></div>
<div class="a" style="left:26.60px;top:351.66px;width:513.40px;height:1.00px;background:#d6d1d2"></div>
<div class="a" style="left:5.00px;top:351.66px;width:21.60px;height:1.00px;background:#c4c4c4"></div>
<div class="a" style="left:26.60px;top:362.28px;width:513.40px;height:1.00px;background:#d6d1d2"></div>
<div class="a" style="left:5.00px;top:362.28px;width:21.60px;height:1.00px;background:#c4c4c4"></div>
<div class="a" style="left:26.60px;top:372.90px;width:513.40px;height:1.00px;background:#d6d1d2"></div>
<div class="a" style="left:5.00px;top:372.90px;width:21.60px;height:1.00px;background:#c4c4c4"></div>
<div class="a" style="left:26.60px;top:383.52px;width:513.40px;height:1.00px;background:#d6d1d2"></div>
<div class="a" style="left:5.00px;top:383.52px;width:21.60px;height:1.00px;background:#c4c4c4"></div>
<div class="a" style="left:26.60px;top:394.14px;width:513.40px;height:1.00px;background:#d6d1d2"></div>
<div class="a" style="left:5.00px;top:394.14px;width:21.60px;height:1.00px;background:#c4c4c4"></div>
<div class="a" style="left:26.60px;top:404.76px;width:513.40px;height:1.00px;background:#d6d1d2"></div>
<div class="a" style="left:5.00px;top:404.76px;width:21.60px;height:1.00px;background:#c4c4c4"></div>
<div class="a" style="left:26.60px;top:415.38px;width:513.40px;height:1.00px;background:#d6d1d2"></div>
<div class="a" style="left:5.00px;top:415.38px;width:21.60px;height:1.00px;background:#c4c4c4"></div>
<div class="a" style="left:26.60px;top:426.00px;width:513.40px;height:1.00px;background:#d6d1d2"></div>
<div class="a" style="left:5.00px;top:426.00px;width:21.60px;height:1.00px;background:#c4c4c4"></div>
<div class="a" style="left:26.60px;top:436.62px;width:513.40px;height:1.00px;background:#d6d1d2"></div>
<div class="a" style="left:5.00px;top:436.62px;width:21.60px;height:1.00px;background:#c4c4c4"></div>
<div class="a" style="left:26.60px;top:447.24px;width:513.40px;height:1.00px;background:#d6d1d2"></div>
<div class="a" style="left:5.00px;top:447.24px;width:21.60px;height:1.00px;background:#c4c4c4"></div>
<div class="a" style="left:26.60px;top:457.86px;width:513.40px;height:1.00px;background:#d6d1d2"></div>
<div class="a" style="left:5.00px;top:457.86px;width:21.60px;height:1.00px;background:#c4c4c4"></div>
<div class="a" style="left:90.00px;top:170.40px;width:1.00px;height:279.60px;background:#d6d1d2"></div>
<div class="a" style="left:130.90px;top:170.40px;width:1.00px;height:279.60px;background:#d6d1d2"></div>
<div class="a" style="left:182.20px;top:170.40px;width:1.00px;height:279.60px;background:#d6d1d2"></div>
<div class="a" style="left:240.50px;top:170.40px;width:1.00px;height:279.60px;background:#d6d1d2"></div>
<div class="a" style="left:277.30px;top:170.40px;width:1.00px;height:279.60px;background:#d6d1d2"></div>
<div class="a" style="left:315.10px;top:170.40px;width:1.00px;height:279.60px;background:#d6d1d2"></div>
<div class="a" style="left:359.70px;top:170.40px;width:1.00px;height:279.60px;background:#d6d1d2"></div>
<div class="a" style="left:390.90px;top:170.40px;width:1.00px;height:279.60px;background:#d6d1d2"></div>
<div class="a" style="left:461.70px;top:170.40px;width:1.00px;height:279.60px;background:#d6d1d2"></div>
<div class="a" style="left:532.80px;top:170.40px;width:1.00px;height:279.60px;background:#d6d1d2"></div>
<div class="a" style="left:5.00px;top:213.70px;width:535.00px;height:1.80px;background:#3a3a3a"></div>
<div class="a" style="left:0;top:170.40px;width:720px;height:43.30px;overflow:hidden">
<div class="a" style="left:27.60px;top:35.00px;width:67.78px;white-space:nowrap;overflow:hidden;font-size:8.4px;line-height:9.7px;color:#222;-webkit-text-stroke:0.05px #222;transform:scaleX(0.925);transform-origin:0 0">Country</div>
<div class="a" style="left:91.50px;top:35.00px;width:42.92px;white-space:nowrap;overflow:hidden;font-size:8.4px;line-height:9.7px;color:#222;-webkit-text-stroke:0.05px #222;transform:scaleX(0.925);transform-origin:0 0">Downloads</div>
<div class="a" style="left:132.40px;top:15.60px;width:54.16px;white-space:nowrap;overflow:hidden;font-size:8.4px;line-height:9.7px;color:#222;-webkit-text-stroke:0.05px #222;transform:scaleX(0.925);transform-origin:0 0">Population<br>(per<br>Wikipedia)</div>
<div class="a" style="left:183.70px;top:25.30px;width:61.73px;white-space:nowrap;overflow:hidden;font-size:8.4px;line-height:9.7px;color:#222;-webkit-text-stroke:0.05px #222;transform:scaleX(0.925);transform-origin:0 0">Internet Users<br>per 1k</div>
<div class="a" style="left:242.00px;top:5.90px;width:38.49px;white-space:nowrap;overflow:hidden;font-size:8.4px;line-height:9.7px;color:#222;-webkit-text-stroke:0.05px #222;transform:scaleX(0.925);transform-origin:0 0">AOO per<br>1K<br>populatio<br>n</div>
<div class="a" style="left:278.80px;top:5.90px;width:39.57px;white-space:nowrap;overflow:hidden;font-size:8.4px;line-height:9.7px;color:#222;-webkit-text-stroke:0.05px #222;transform:scaleX(0.925);transform-origin:0 0">AOO per<br>1K<br>internet<br>users</div>
<div class="a" style="left:316.60px;top:15.60px;width:46.92px;white-space:nowrap;overflow:hidden;font-size:8.4px;line-height:9.7px;color:#222;-webkit-text-stroke:0.05px #222;transform:scaleX(0.925);transform-origin:0 0">Rank (AOO<br>per<br>Population)</div>
</div>
<div class="a" style="left:0;top:172.2px;width:720px;height:41.50px;overflow:hidden">
<div class="a" style="left:361.20px;top:-5.60px;width:32.43px;white-space:nowrap;overflow:hidden;font-size:8.4px;line-height:9.7px;color:#222;-webkit-text-stroke:0.05px #222;transform:scaleX(0.925);transform-origin:0 0">Rank<br>(AOO<br>per<br>Internet<br>Users)</div>
</div>
<svg class="a" style="left:389.5px;top:190px" width="3" height="4"><path d="M0 0 L2.7 1.7 L0 3.5z" fill="#b01020"/></svg>
<div class="a" style="left:5.00px;top:215.30px;white-space:nowrap;width:21.60px;text-align:center;font-size:8px;line-height:9px;color:#2a2a2a;transform:scaleX(0.86);transform-origin:50% 0;">188</div>
<div class="a" style="left:27.90px;top:215.80px;white-space:nowrap;font-size:8.4px;line-height:9.7px;color:#222;-webkit-text-stroke:0.05px #222;transform:scaleX(0.925);transform-origin:0 0">San Marino</div>
<div class="a" style="left:90.50px;top:215.80px;width:39.30px;text-align:right;white-space:nowrap;font-size:8.4px;line-height:9.7px;color:#222;-webkit-text-stroke:0.05px #222;transform:scaleX(0.925);transform-origin:100% 0">1,067</div>
<div class="a" style="left:131.40px;top:215.80px;width:49.70px;text-align:right;white-space:nowrap;font-size:8.4px;line-height:9.7px;color:#222;-webkit-text-stroke:0.05px #222;transform:scaleX(0.925);transform-origin:100% 0">32,457</div>
<div class="a" style="left:182.70px;top:215.80px;width:56.70px;text-align:right;white-space:nowrap;font-size:8.4px;line-height:9.7px;color:#222;-webkit-text-stroke:0.05px #222;transform:scaleX(0.925);transform-origin:100% 0">15,781</div>
<div class="a" style="left:241.00px;top:215.80px;width:35.20px;text-align:right;white-space:nowrap;font-size:8.4px;line-height:9.7px;color:#222;-webkit-text-stroke:0.05px #222;transform:scaleX(0.925);transform-origin:100% 0">32.874</div>
<div class="a" style="left:277.80px;top:215.80px;width:36.20px;text-align:right;white-space:nowrap;font-size:8.4px;line-height:9.7px;color:#222;-webkit-text-stroke:0.05px #222;transform:scaleX(0.925);transform-origin:100% 0">68</div>
<div class="a" style="left:315.60px;top:215.80px;width:43.00px;text-align:right;white-space:nowrap;font-size:8.4px;line-height:9.7px;color:#222;-webkit-text-stroke:0.05px #222;transform:scaleX(0.925);transform-origin:100% 0">13</div>
<div class="a" style="left:360.20px;top:215.80px;width:29.60px;text-align:right;white-space:nowrap;font-size:8.4px;line-height:9.7px;color:#222;-webkit-text-stroke:0.05px #222;transform:scaleX(0.925);transform-origin:100% 0">4</div>
<div class="a" style="left:5.00px;top:225.92px;white-space:nowrap;width:21.60px;text-align:center;font-size:8px;line-height:9px;color:#2a2a2a;transform:scaleX(0.86);transform-origin:50% 0;">189</div>
<div class="a" style="left:27.90px;top:226.42px;white-space:nowrap;font-size:8.4px;line-height:9.7px;color:#222;-webkit-text-stroke:0.05px #222;transform:scaleX(0.925);transform-origin:0 0">Netherlands</div>
<div class="a" style="left:90.50px;top:226.42px;width:39.30px;text-align:right;white-space:nowrap;font-size:8.4px;line-height:9.7px;color:#222;-webkit-text-stroke:0.05px #222;transform:scaleX(0.925);transform-origin:100% 0">568,068</div>
<div class="a" style="left:131.40px;top:226.42px;width:49.70px;text-align:right;white-space:nowrap;font-size:8.4px;line-height:9.7px;color:#222;-webkit-text-stroke:0.05px #222;transform:scaleX(0.925);transform-origin:100% 0">16,751,323</div>
<div class="a" style="left:182.70px;top:226.42px;width:56.70px;text-align:right;white-space:nowrap;font-size:8.4px;line-height:9.7px;color:#222;-webkit-text-stroke:0.05px #222;transform:scaleX(0.925);transform-origin:100% 0">15,371,396</div>
<div class="a" style="left:241.00px;top:226.42px;width:35.20px;text-align:right;white-space:nowrap;font-size:8.4px;line-height:9.7px;color:#222;-webkit-text-stroke:0.05px #222;transform:scaleX(0.925);transform-origin:100% 0">33.912</div>
<div class="a" style="left:277.80px;top:226.42px;width:36.20px;text-align:right;white-space:nowrap;font-size:8.4px;line-height:9.7px;color:#222;-webkit-text-stroke:0.05px #222;transform:scaleX(0.925);transform-origin:100% 0">37</div>
<div class="a" style="left:315.60px;top:226.42px;width:43.00px;text-align:right;white-space:nowrap;font-size:8.4px;line-height:9.7px;color:#222;-webkit-text-stroke:0.05px #222;transform:scaleX(0.925);transform-origin:100% 0">12</div>
<div class="a" style="left:360.20px;top:226.42px;width:29.60px;text-align:right;white-space:nowrap;font-size:8.4px;line-height:9.7px;color:#222;-webkit-text-stroke:0.05px #222;transform:scaleX(0.925);transform-origin:100% 0">14</div>
<div class="a" style="left:5.00px;top:236.54px;white-space:nowrap;width:21.60px;text-align:center;font-size:8px;line-height:9px;color:#2a2a2a;transform:scaleX(0.86);transform-origin:50% 0;">190</div>
<div class="a" style="left:27.90px;top:237.04px;white-space:nowrap;font-size:8.4px;line-height:9.7px;color:#222;-webkit-text-stroke:0.05px #222;transform:scaleX(0.925);transform-origin:0 0">(Malvinas)</div>
<div class="a" style="left:90.50px;top:237.04px;width:39.30px;text-align:right;white-space:nowrap;font-size:8.4px;line-height:9.7px;color:#222;-webkit-text-stroke:0.05px #222;transform:scaleX(0.925);transform-origin:100% 0">100</div>
<div class="a" style="left:131.40px;top:237.04px;width:49.70px;text-align:right;white-space:nowrap;font-size:8.4px;line-height:9.7px;color:#222;-webkit-text-stroke:0.05px #222;transform:scaleX(0.925);transform-origin:100% 0">2,563</div>
<div class="a" style="left:182.70px;top:237.04px;width:56.70px;text-align:right;white-space:nowrap;font-size:8.4px;line-height:9.7px;color:#222;-webkit-text-stroke:0.05px #222;transform:scaleX(0.925);transform-origin:100% 0">2,908</div>
<div class="a" style="left:241.00px;top:237.04px;width:35.20px;text-align:right;white-space:nowrap;font-size:8.4px;line-height:9.7px;color:#222;-webkit-text-stroke:0.05px #222;transform:scaleX(0.925);transform-origin:100% 0">39.017</div>
<div class="a" style="left:277.80px;top:237.04px;width:36.20px;text-align:right;white-space:nowrap;font-size:8.4px;line-height:9.7px;color:#222;-webkit-text-stroke:0.05px #222;transform:scaleX(0.925);transform-origin:100% 0">34</div>
<div class="a" style="left:315.60px;top:237.04px;width:43.00px;text-align:right;white-space:nowrap;font-size:8.4px;line-height:9.7px;color:#222;-webkit-text-stroke:0.05px #222;transform:scaleX(0.925);transform-origin:100% 0">11</div>
<div class="a" style="left:360.20px;top:237.04px;width:29.60px;text-align:right;white-space:nowrap;font-size:8.4px;line-height:9.7px;color:#222;-webkit-text-stroke:0.05px #222;transform:scaleX(0.925);transform-origin:100% 0">18</div>
<div class="a" style="left:5.00px;top:247.16px;white-space:nowrap;width:21.60px;text-align:center;font-size:8px;line-height:9px;color:#2a2a2a;transform:scaleX(0.86);transform-origin:50% 0;">191</div>
<div class="a" style="left:27.90px;top:247.66px;white-space:nowrap;font-size:8.4px;line-height:9.7px;color:#222;-webkit-text-stroke:0.05px #222;transform:scaleX(0.925);transform-origin:0 0">Finland</div>
<div class="a" style="left:90.50px;top:247.66px;width:39.30px;text-align:right;white-space:nowrap;font-size:8.4px;line-height:9.7px;color:#222;-webkit-text-stroke:0.05px #222;transform:scaleX(0.925);transform-origin:100% 0">212,152</div>
<div class="a" style="left:131.40px;top:247.66px;width:49.70px;text-align:right;white-space:nowrap;font-size:8.4px;line-height:9.7px;color:#222;-webkit-text-stroke:0.05px #222;transform:scaleX(0.925);transform-origin:100% 0">5,387,000</div>
<div class="a" style="left:182.70px;top:247.66px;width:56.70px;text-align:right;white-space:nowrap;font-size:8.4px;line-height:9.7px;color:#222;-webkit-text-stroke:0.05px #222;transform:scaleX(0.925);transform-origin:100% 0">4,700,192</div>
<div class="a" style="left:241.00px;top:247.66px;width:35.20px;text-align:right;white-space:nowrap;font-size:8.4px;line-height:9.7px;color:#222;-webkit-text-stroke:0.05px #222;transform:scaleX(0.925);transform-origin:100% 0">39.382</div>
<div class="a" style="left:277.80px;top:247.66px;width:36.20px;text-align:right;white-space:nowrap;font-size:8.4px;line-height:9.7px;color:#222;-webkit-text-stroke:0.05px #222;transform:scaleX(0.925);transform-origin:100% 0">45</div>
<div class="a" style="left:315.60px;top:247.66px;width:43.00px;text-align:right;white-space:nowrap;font-size:8.4px;line-height:9.7px;color:#222;-webkit-text-stroke:0.05px #222;transform:scaleX(0.925);transform-origin:100% 0">10</div>
<div class="a" style="left:360.20px;top:247.66px;width:29.60px;text-align:right;white-space:nowrap;font-size:8.4px;line-height:9.7px;color:#222;-webkit-text-stroke:0.05px #222;transform:scaleX(0.925);transform-origin:100% 0">10</div>
<div class="a" style="left:5.00px;top:257.78px;white-space:nowrap;width:21.60px;text-align:center;font-size:8px;line-height:9px;color:#2a2a2a;transform:scaleX(0.86);transform-origin:50% 0;">192</div>
<div class="a" style="left:27.90px;top:258.28px;white-space:nowrap;font-size:8.4px;line-height:9.7px;color:#222;-webkit-text-stroke:0.05px #222;transform:scaleX(0.925);transform-origin:0 0">Switzerland</div>
<div class="a" style="left:90.50px;top:258.28px;width:39.30px;text-align:right;white-space:nowrap;font-size:8.4px;line-height:9.7px;color:#222;-webkit-text-stroke:0.05px #222;transform:scaleX(0.925);transform-origin:100% 0">333,002</div>
<div class="a" style="left:131.40px;top:258.28px;width:49.70px;text-align:right;white-space:nowrap;font-size:8.4px;line-height:9.7px;color:#222;-webkit-text-stroke:0.05px #222;transform:scaleX(0.925);transform-origin:100% 0">8,000,000</div>
<div class="a" style="left:182.70px;top:258.28px;width:56.70px;text-align:right;white-space:nowrap;font-size:8.4px;line-height:9.7px;color:#222;-webkit-text-stroke:0.05px #222;transform:scaleX(0.925);transform-origin:100% 0">6,688,285</div>
<div class="a" style="left:241.00px;top:258.28px;width:35.20px;text-align:right;white-space:nowrap;font-size:8.4px;line-height:9.7px;color:#222;-webkit-text-stroke:0.05px #222;transform:scaleX(0.925);transform-origin:100% 0">41.625</div>
<div class="a" style="left:277.80px;top:258.28px;width:36.20px;text-align:right;white-space:nowrap;font-size:8.4px;line-height:9.7px;color:#222;-webkit-text-stroke:0.05px #222;transform:scaleX(0.925);transform-origin:100% 0">50</div>
<div class="a" style="left:315.60px;top:258.28px;width:43.00px;text-align:right;white-space:nowrap;font-size:8.4px;line-height:9.7px;color:#222;-webkit-text-stroke:0.05px #222;transform:scaleX(0.925);transform-origin:100% 0">9</div>
<div class="a" style="left:360.20px;top:258.28px;width:29.60px;text-align:right;white-space:nowrap;font-size:8.4px;line-height:9.7px;color:#222;-webkit-text-stroke:0.05px #222;transform:scaleX(0.925);transform-origin:100% 0">9</div>
<div class="a" style="left:5.00px;top:268.40px;white-space:nowrap;width:21.60px;text-align:center;font-size:8px;line-height:9px;color:#2a2a2a;transform:scaleX(0.86);transform-origin:50% 0;">193</div>
<div class="a" style="left:27.90px;top:268.90px;white-space:nowrap;font-size:8.4px;line-height:9.7px;color:#222;-webkit-text-stroke:0.05px #222;transform:scaleX(0.925);transform-origin:0 0">Estonia</div>
<div class="a" style="left:90.50px;top:268.90px;width:39.30px;text-align:right;white-space:nowrap;font-size:8.4px;line-height:9.7px;color:#222;-webkit-text-stroke:0.05px #222;transform:scaleX(0.925);transform-origin:100% 0">55,255</div>
<div class="a" style="left:131.40px;top:268.90px;width:49.70px;text-align:right;white-space:nowrap;font-size:8.4px;line-height:9.7px;color:#222;-webkit-text-stroke:0.05px #222;transform:scaleX(0.925);transform-origin:100% 0">1,294,000</div>
<div class="a" style="left:182.70px;top:268.90px;width:56.70px;text-align:right;white-space:nowrap;font-size:8.4px;line-height:9.7px;color:#222;-webkit-text-stroke:0.05px #222;transform:scaleX(0.925);transform-origin:100% 0">981,467</div>
<div class="a" style="left:241.00px;top:268.90px;width:35.20px;text-align:right;white-space:nowrap;font-size:8.4px;line-height:9.7px;color:#222;-webkit-text-stroke:0.05px #222;transform:scaleX(0.925);transform-origin:100% 0">42.701</div>
<div class="a" style="left:277.80px;top:268.90px;width:36.20px;text-align:right;white-space:nowrap;font-size:8.4px;line-height:9.7px;color:#222;-webkit-text-stroke:0.05px #222;transform:scaleX(0.925);transform-origin:100% 0">56</div>
<div class="a" style="left:315.60px;top:268.90px;width:43.00px;text-align:right;white-space:nowrap;font-size:8.4px;line-height:9.7px;color:#222;-webkit-text-stroke:0.05px #222;transform:scaleX(0.925);transform-origin:100% 0">8</div>
<div class="a" style="left:360.20px;top:268.90px;width:29.60px;text-align:right;white-space:nowrap;font-size:8.4px;line-height:9.7px;color:#222;-webkit-text-stroke:0.05px #222;transform:scaleX(0.925);transform-origin:100% 0">7</div>
<div class="a" style="left:5.00px;top:279.02px;white-space:nowrap;width:21.60px;text-align:center;font-size:8px;line-height:9px;color:#2a2a2a;transform:scaleX(0.86);transform-origin:50% 0;">194</div>
<div class="a" style="left:27.90px;top:279.52px;white-space:nowrap;font-size:8.4px;line-height:9.7px;color:#222;-webkit-text-stroke:0.05px #222;transform:scaleX(0.925);transform-origin:0 0">Germany</div>
<div class="a" style="left:90.50px;top:279.52px;width:39.30px;text-align:right;white-space:nowrap;font-size:8.4px;line-height:9.7px;color:#222;-webkit-text-stroke:0.05px #222;transform:scaleX(0.925);transform-origin:100% 0">3,602,587</div>
<div class="a" style="left:131.40px;top:279.52px;width:49.70px;text-align:right;white-space:nowrap;font-size:8.4px;line-height:9.7px;color:#222;-webkit-text-stroke:0.05px #222;transform:scaleX(0.925);transform-origin:100% 0">81,799,600</div>
<div class="a" style="left:182.70px;top:279.52px;width:56.70px;text-align:right;white-space:nowrap;font-size:8.4px;line-height:9.7px;color:#222;-webkit-text-stroke:0.05px #222;transform:scaleX(0.925);transform-origin:100% 0">67,621,622</div>
<div class="a" style="left:241.00px;top:279.52px;width:35.20px;text-align:right;white-space:nowrap;font-size:8.4px;line-height:9.7px;color:#222;-webkit-text-stroke:0.05px #222;transform:scaleX(0.925);transform-origin:100% 0">44.042</div>
<div class="a" style="left:277.80px;top:279.52px;width:36.20px;text-align:right;white-space:nowrap;font-size:8.4px;line-height:9.7px;color:#222;-webkit-text-stroke:0.05px #222;transform:scaleX(0.925);transform-origin:100% 0">53</div>
<div class="a" style="left:315.60px;top:279.52px;width:43.00px;text-align:right;white-space:nowrap;font-size:8.4px;line-height:9.7px;color:#222;-webkit-text-stroke:0.05px #222;transform:scaleX(0.925);transform-origin:100% 0">7</div>
<div class="a" style="left:360.20px;top:279.52px;width:29.60px;text-align:right;white-space:nowrap;font-size:8.4px;line-height:9.7px;color:#222;-webkit-text-stroke:0.05px #222;transform:scaleX(0.925);transform-origin:100% 0">8</div>
<div class="a" style="left:5.00px;top:289.64px;white-space:nowrap;width:21.60px;text-align:center;font-size:8px;line-height:9px;color:#2a2a2a;transform:scaleX(0.86);transform-origin:50% 0;">195</div>
<div class="a" style="left:27.90px;top:290.14px;white-space:nowrap;font-size:8.4px;line-height:9.7px;color:#222;-webkit-text-stroke:0.05px #222;transform:scaleX(0.925);transform-origin:0 0">Belgium</div>
<div class="a" style="left:90.50px;top:290.14px;width:39.30px;text-align:right;white-space:nowrap;font-size:8.4px;line-height:9.7px;color:#222;-webkit-text-stroke:0.05px #222;transform:scaleX(0.925);transform-origin:100% 0">529,150</div>
<div class="a" style="left:131.40px;top:290.14px;width:49.70px;text-align:right;white-space:nowrap;font-size:8.4px;line-height:9.7px;color:#222;-webkit-text-stroke:0.05px #222;transform:scaleX(0.925);transform-origin:100% 0">11,041,266</div>
<div class="a" style="left:182.70px;top:290.14px;width:56.70px;text-align:right;white-space:nowrap;font-size:8.4px;line-height:9.7px;color:#222;-webkit-text-stroke:0.05px #222;transform:scaleX(0.925);transform-origin:100% 0">8,136,552</div>
<div class="a" style="left:241.00px;top:290.14px;width:35.20px;text-align:right;white-space:nowrap;font-size:8.4px;line-height:9.7px;color:#222;-webkit-text-stroke:0.05px #222;transform:scaleX(0.925);transform-origin:100% 0">47.925</div>
<div class="a" style="left:277.80px;top:290.14px;width:36.20px;text-align:right;white-space:nowrap;font-size:8.4px;line-height:9.7px;color:#222;-webkit-text-stroke:0.05px #222;transform:scaleX(0.925);transform-origin:100% 0">65</div>
<div class="a" style="left:315.60px;top:290.14px;width:43.00px;text-align:right;white-space:nowrap;font-size:8.4px;line-height:9.7px;color:#222;-webkit-text-stroke:0.05px #222;transform:scaleX(0.925);transform-origin:100% 0">6</div>
<div class="a" style="left:360.20px;top:290.14px;width:29.60px;text-align:right;white-space:nowrap;font-size:8.4px;line-height:9.7px;color:#222;-webkit-text-stroke:0.05px #222;transform:scaleX(0.925);transform-origin:100% 0">6</div>
<div class="a" style="left:5.00px;top:300.26px;white-space:nowrap;width:21.60px;text-align:center;font-size:8px;line-height:9px;color:#2a2a2a;transform:scaleX(0.86);transform-origin:50% 0;">196</div>
<div class="a" style="left:27.90px;top:300.76px;white-space:nowrap;font-size:8.4px;line-height:9.7px;color:#222;-webkit-text-stroke:0.05px #222;transform:scaleX(0.925);transform-origin:0 0">Ukraine</div>
<div class="a" style="left:90.50px;top:300.76px;width:39.30px;text-align:right;white-space:nowrap;font-size:8.4px;line-height:9.7px;color:#222;-webkit-text-stroke:0.05px #222;transform:scaleX(0.925);transform-origin:100% 0">224,151</div>
<div class="a" style="left:131.40px;top:300.76px;width:49.70px;text-align:right;white-space:nowrap;font-size:8.4px;line-height:9.7px;color:#222;-webkit-text-stroke:0.05px #222;transform:scaleX(0.925);transform-origin:100% 0">4,570,610</div>
<div class="a" style="left:182.70px;top:300.76px;width:56.70px;text-align:right;white-space:nowrap;font-size:8.4px;line-height:9.7px;color:#222;-webkit-text-stroke:0.05px #222;transform:scaleX(0.925);transform-origin:100% 0">13,811,220</div>
<div class="a" style="left:241.00px;top:300.76px;width:35.20px;text-align:right;white-space:nowrap;font-size:8.4px;line-height:9.7px;color:#222;-webkit-text-stroke:0.05px #222;transform:scaleX(0.925);transform-origin:100% 0">49.042</div>
<div class="a" style="left:277.80px;top:300.76px;width:36.20px;text-align:right;white-space:nowrap;font-size:8.4px;line-height:9.7px;color:#222;-webkit-text-stroke:0.05px #222;transform:scaleX(0.925);transform-origin:100% 0">16</div>
<div class="a" style="left:315.60px;top:300.76px;width:43.00px;text-align:right;white-space:nowrap;font-size:8.4px;line-height:9.7px;color:#222;-webkit-text-stroke:0.05px #222;transform:scaleX(0.925);transform-origin:100% 0">5</div>
<div class="a" style="left:360.20px;top:300.76px;width:29.60px;text-align:right;white-space:nowrap;font-size:8.4px;line-height:9.7px;color:#222;-webkit-text-stroke:0.05px #222;transform:scaleX(0.925);transform-origin:100% 0">44</div>
<div class="a" style="left:5.00px;top:310.88px;white-space:nowrap;width:21.60px;text-align:center;font-size:8px;line-height:9px;color:#2a2a2a;transform:scaleX(0.86);transform-origin:50% 0;">197</div>
<div class="a" style="left:27.90px;top:311.38px;white-space:nowrap;font-size:8.4px;line-height:9.7px;color:#222;-webkit-text-stroke:0.05px #222;transform:scaleX(0.925);transform-origin:0 0">Italy</div>
<div class="a" style="left:90.50px;top:311.38px;width:39.30px;text-align:right;white-space:nowrap;font-size:8.4px;line-height:9.7px;color:#222;-webkit-text-stroke:0.05px #222;transform:scaleX(0.925);transform-origin:100% 0">3,160,660</div>
<div class="a" style="left:131.40px;top:311.38px;width:49.70px;text-align:right;white-space:nowrap;font-size:8.4px;line-height:9.7px;color:#222;-webkit-text-stroke:0.05px #222;transform:scaleX(0.925);transform-origin:100% 0">60,813,326</div>
<div class="a" style="left:182.70px;top:311.38px;width:56.70px;text-align:right;white-space:nowrap;font-size:8.4px;line-height:9.7px;color:#222;-webkit-text-stroke:0.05px #222;transform:scaleX(0.925);transform-origin:100% 0">34,657,545</div>
<div class="a" style="left:241.00px;top:311.38px;width:35.20px;text-align:right;white-space:nowrap;font-size:8.4px;line-height:9.7px;color:#222;-webkit-text-stroke:0.05px #222;transform:scaleX(0.925);transform-origin:100% 0">51.973</div>
<div class="a" style="left:277.80px;top:311.38px;width:36.20px;text-align:right;white-space:nowrap;font-size:8.4px;line-height:9.7px;color:#222;-webkit-text-stroke:0.05px #222;transform:scaleX(0.925);transform-origin:100% 0">91</div>
<div class="a" style="left:315.60px;top:311.38px;width:43.00px;text-align:right;white-space:nowrap;font-size:8.4px;line-height:9.7px;color:#222;-webkit-text-stroke:0.05px #222;transform:scaleX(0.925);transform-origin:100% 0">4</div>
<div class="a" style="left:360.20px;top:311.38px;width:29.60px;text-align:right;white-space:nowrap;font-size:8.4px;line-height:9.7px;color:#222;-webkit-text-stroke:0.05px #222;transform:scaleX(0.925);transform-origin:100% 0">2</div>
<div class="a" style="left:5.00px;top:321.50px;white-space:nowrap;width:21.60px;text-align:center;font-size:8px;line-height:9px;color:#2a2a2a;transform:scaleX(0.86);transform-origin:50% 0;">198</div>
<div class="a" style="left:27.90px;top:322.00px;white-space:nowrap;font-size:8.4px;line-height:9.7px;color:#222;-webkit-text-stroke:0.05px #222;transform:scaleX(0.925);transform-origin:0 0">Luxembourg</div>
<div class="a" style="left:90.50px;top:322.00px;width:39.30px;text-align:right;white-space:nowrap;font-size:8.4px;line-height:9.7px;color:#222;-webkit-text-stroke:0.05px #222;transform:scaleX(0.925);transform-origin:100% 0">29,788</div>
<div class="a" style="left:131.40px;top:322.00px;width:49.70px;text-align:right;white-space:nowrap;font-size:8.4px;line-height:9.7px;color:#222;-webkit-text-stroke:0.05px #222;transform:scaleX(0.925);transform-origin:100% 0">517,000</div>
<div class="a" style="left:182.70px;top:322.00px;width:56.70px;text-align:right;white-space:nowrap;font-size:8.4px;line-height:9.7px;color:#222;-webkit-text-stroke:0.05px #222;transform:scaleX(0.925);transform-origin:100% 0">457,451</div>
<div class="a" style="left:241.00px;top:322.00px;width:35.20px;text-align:right;white-space:nowrap;font-size:8.4px;line-height:9.7px;color:#222;-webkit-text-stroke:0.05px #222;transform:scaleX(0.925);transform-origin:100% 0">57.617</div>
<div class="a" style="left:277.80px;top:322.00px;width:36.20px;text-align:right;white-space:nowrap;font-size:8.4px;line-height:9.7px;color:#222;-webkit-text-stroke:0.05px #222;transform:scaleX(0.925);transform-origin:100% 0">65</div>
<div class="a" style="left:315.60px;top:322.00px;width:43.00px;text-align:right;white-space:nowrap;font-size:8.4px;line-height:9.7px;color:#222;-webkit-text-stroke:0.05px #222;transform:scaleX(0.925);transform-origin:100% 0">3</div>
<div class="a" style="left:360.20px;top:322.00px;width:29.60px;text-align:right;white-space:nowrap;font-size:8.4px;line-height:9.7px;color:#222;-webkit-text-stroke:0.05px #222;transform:scaleX(0.925);transform-origin:100% 0">5</div>
<div class="a" style="left:5.00px;top:332.12px;white-space:nowrap;width:21.60px;text-align:center;font-size:8px;line-height:9px;color:#2a2a2a;transform:scaleX(0.86);transform-origin:50% 0;">199</div>
<div class="a" style="left:27.90px;top:332.62px;white-space:nowrap;font-size:8.4px;line-height:9.7px;color:#222;-webkit-text-stroke:0.05px #222;transform:scaleX(0.925);transform-origin:0 0">Monaco</div>
<div class="a" style="left:90.50px;top:332.62px;width:39.30px;text-align:right;white-space:nowrap;font-size:8.4px;line-height:9.7px;color:#222;-webkit-text-stroke:0.05px #222;transform:scaleX(0.925);transform-origin:100% 0">2,348</div>
<div class="a" style="left:131.40px;top:332.62px;width:49.70px;text-align:right;white-space:nowrap;font-size:8.4px;line-height:9.7px;color:#222;-webkit-text-stroke:0.05px #222;transform:scaleX(0.925);transform-origin:100% 0">35,000</div>
<div class="a" style="left:182.70px;top:332.62px;width:56.70px;text-align:right;white-space:nowrap;font-size:8.4px;line-height:9.7px;color:#222;-webkit-text-stroke:0.05px #222;transform:scaleX(0.925);transform-origin:100% 0">22,940</div>
<div class="a" style="left:241.00px;top:332.62px;width:35.20px;text-align:right;white-space:nowrap;font-size:8.4px;line-height:9.7px;color:#222;-webkit-text-stroke:0.05px #222;transform:scaleX(0.925);transform-origin:100% 0">67.086</div>
<div class="a" style="left:277.80px;top:332.62px;width:36.20px;text-align:right;white-space:nowrap;font-size:8.4px;line-height:9.7px;color:#222;-webkit-text-stroke:0.05px #222;transform:scaleX(0.925);transform-origin:100% 0">102</div>
<div class="a" style="left:315.60px;top:332.62px;width:43.00px;text-align:right;white-space:nowrap;font-size:8.4px;line-height:9.7px;color:#222;-webkit-text-stroke:0.05px #222;transform:scaleX(0.925);transform-origin:100% 0">2</div>
<div class="a" style="left:360.20px;top:332.62px;width:29.60px;text-align:right;white-space:nowrap;font-size:8.4px;line-height:9.7px;color:#222;-webkit-text-stroke:0.05px #222;transform:scaleX(0.925);transform-origin:100% 0">1</div>
<div class="a" style="left:5.00px;top:341.54px;width:21.10px;height:10.62px;background:#2392ee"></div>
<div class="a" style="left:5.00px;top:342.74px;white-space:nowrap;width:21.60px;text-align:center;font-size:8px;line-height:9px;color:#fff;transform:scaleX(0.86);transform-origin:50% 0;font-weight:bold;">200</div>
<div class="a" style="left:27.90px;top:343.24px;white-space:nowrap;font-size:8.4px;line-height:9.7px;color:#222;-webkit-text-stroke:0.05px #222;transform:scaleX(0.925);transform-origin:0 0">France</div>
<div class="a" style="left:90.50px;top:343.24px;width:39.30px;text-align:right;white-space:nowrap;font-size:8.4px;line-height:9.7px;color:#222;-webkit-text-stroke:0.05px #222;transform:scaleX(0.925);transform-origin:100% 0">4,561,852</div>
<div class="a" style="left:131.40px;top:343.24px;width:49.70px;text-align:right;white-space:nowrap;font-size:8.4px;line-height:9.7px;color:#222;-webkit-text-stroke:0.05px #222;transform:scaleX(0.925);transform-origin:100% 0">65,350,000</div>
<div class="a" style="left:182.70px;top:343.24px;width:56.70px;text-align:right;white-space:nowrap;font-size:8.4px;line-height:9.7px;color:#222;-webkit-text-stroke:0.05px #222;transform:scaleX(0.925);transform-origin:100% 0">51,962,632</div>
<div class="a" style="left:241.00px;top:343.24px;width:35.20px;text-align:right;white-space:nowrap;font-size:8.4px;line-height:9.7px;color:#222;-webkit-text-stroke:0.05px #222;transform:scaleX(0.925);transform-origin:100% 0">69.806</div>
<div class="a" style="left:277.80px;top:343.24px;width:36.20px;text-align:right;white-space:nowrap;font-size:8.4px;line-height:9.7px;color:#222;-webkit-text-stroke:0.05px #222;transform:scaleX(0.925);transform-origin:100% 0">88</div>
<div class="a" style="left:315.60px;top:343.24px;width:43.00px;text-align:right;white-space:nowrap;font-size:8.4px;line-height:9.7px;color:#222;-webkit-text-stroke:0.05px #222;transform:scaleX(0.925);transform-origin:100% 0">1</div>
<div class="a" style="left:360.20px;top:343.24px;width:29.60px;text-align:right;white-space:nowrap;font-size:8.4px;line-height:9.7px;color:#222;-webkit-text-stroke:0.05px #222;transform:scaleX(0.925);transform-origin:100% 0">3</div>
<div class="a" style="left:5.00px;top:353.36px;white-space:nowrap;width:21.60px;text-align:center;font-size:8px;line-height:9px;color:#2a2a2a;transform:scaleX(0.86);transform-origin:50% 0;">201</div>
<div class="a" style="left:27.90px;top:353.86px;white-space:nowrap;font-size:8.4px;line-height:9.7px;color:#222;-webkit-text-stroke:0.05px #222;transform:scaleX(0.925);transform-origin:0 0">Poland</div>
<div class="a" style="left:90.50px;top:353.86px;width:39.30px;text-align:right;white-space:nowrap;font-size:8.4px;line-height:9.7px;color:#222;-webkit-text-stroke:0.05px #222;transform:scaleX(0.925);transform-origin:100% 0">113,929</div>
<div class="a" style="left:131.40px;top:353.86px;width:49.70px;text-align:right;white-space:nowrap;font-size:8.4px;line-height:9.7px;color:#222;-webkit-text-stroke:0.05px #222;transform:scaleX(0.925);transform-origin:100% 0">38,216,000</div>
<div class="a" style="left:182.70px;top:353.86px;width:56.70px;text-align:right;white-space:nowrap;font-size:8.4px;line-height:9.7px;color:#222;-webkit-text-stroke:0.05px #222;transform:scaleX(0.925);transform-origin:100% 0">24,940,902</div>
<div class="a" style="left:241.00px;top:353.86px;width:35.20px;text-align:right;white-space:nowrap;font-size:8.4px;line-height:9.7px;color:#222;-webkit-text-stroke:0.05px #222;transform:scaleX(0.925);transform-origin:100% 0">0.470</div>
<div class="a" style="left:277.80px;top:353.86px;width:36.20px;text-align:right;white-space:nowrap;font-size:8.4px;line-height:9.7px;color:#222;-webkit-text-stroke:0.05px #222;transform:scaleX(0.925);transform-origin:100% 0">5</div>
<div class="a" style="left:315.60px;top:353.86px;width:43.00px;text-align:right;white-space:nowrap;font-size:8.4px;line-height:9.7px;color:#222;-webkit-text-stroke:0.05px #222;transform:scaleX(0.925);transform-origin:100% 0">133</div>
<div class="a" style="left:360.20px;top:353.86px;width:29.60px;text-align:right;white-space:nowrap;font-size:8.4px;line-height:9.7px;color:#222;-webkit-text-stroke:0.05px #222;transform:scaleX(0.925);transform-origin:100% 0">126</div>
<div class="a" style="left:5.00px;top:363.98px;white-space:nowrap;width:21.60px;text-align:center;font-size:8px;line-height:9px;color:#2a2a2a;transform:scaleX(0.86);transform-origin:50% 0;">202</div>
<div class="a" style="left:27.90px;top:364.48px;white-space:nowrap;font-size:8.4px;line-height:9.7px;color:#222;-webkit-text-stroke:0.05px #222;transform:scaleX(0.925);transform-origin:0 0">Indonesia</div>
<div class="a" style="left:90.50px;top:364.48px;width:39.30px;text-align:right;white-space:nowrap;font-size:8.4px;line-height:9.7px;color:#222;-webkit-text-stroke:0.05px #222;transform:scaleX(0.925);transform-origin:100% 0">134,095</div>
<div class="a" style="left:131.40px;top:364.48px;width:49.70px;text-align:right;white-space:nowrap;font-size:8.4px;line-height:9.7px;color:#222;-webkit-text-stroke:0.05px #222;transform:scaleX(0.925);transform-origin:100% 0">242,325,000</div>
<div class="a" style="left:182.70px;top:364.48px;width:56.70px;text-align:right;white-space:nowrap;font-size:8.4px;line-height:9.7px;color:#222;-webkit-text-stroke:0.05px #222;transform:scaleX(0.925);transform-origin:100% 0">44,291,729</div>
<div class="a" style="left:241.00px;top:364.48px;width:35.20px;text-align:right;white-space:nowrap;font-size:8.4px;line-height:9.7px;color:#222;-webkit-text-stroke:0.05px #222;transform:scaleX(0.925);transform-origin:100% 0">0.553</div>
<div class="a" style="left:277.80px;top:364.48px;width:36.20px;text-align:right;white-space:nowrap;font-size:8.4px;line-height:9.7px;color:#222;-webkit-text-stroke:0.05px #222;transform:scaleX(0.925);transform-origin:100% 0">3</div>
<div class="a" style="left:315.60px;top:364.48px;width:43.00px;text-align:right;white-space:nowrap;font-size:8.4px;line-height:9.7px;color:#222;-webkit-text-stroke:0.05px #222;transform:scaleX(0.925);transform-origin:100% 0">132</div>
<div class="a" style="left:360.20px;top:364.48px;width:29.60px;text-align:right;white-space:nowrap;font-size:8.4px;line-height:9.7px;color:#222;-webkit-text-stroke:0.05px #222;transform:scaleX(0.925);transform-origin:100% 0">142</div>
<div class="a" style="left:5.00px;top:374.60px;white-space:nowrap;width:21.60px;text-align:center;font-size:8px;line-height:9px;color:#2a2a2a;transform:scaleX(0.86);transform-origin:50% 0">203</div>
<div class="a" style="left:5.00px;top:385.22px;white-space:nowrap;width:21.60px;text-align:center;font-size:8px;line-height:9px;color:#2a2a2a;transform:scaleX(0.86);transform-origin:50% 0">204</div>
<div class="a" style="left:5.00px;top:395.84px;white-space:nowrap;width:21.60px;text-align:center;font-size:8px;line-height:9px;color:#2a2a2a;transform:scaleX(0.86);transform-origin:50% 0">205</div>
<div class="a" style="left:5.00px;top:406.46px;white-space:nowrap;width:21.60px;text-align:center;font-size:8px;line-height:9px;color:#2a2a2a;transform:scaleX(0.86);transform-origin:50% 0">206</div>
<div class="a" style="left:5.00px;top:417.08px;white-space:nowrap;width:21.60px;text-align:center;font-size:8px;line-height:9px;color:#2a2a2a;transform:scaleX(0.86);transform-origin:50% 0">207</div>
<div class="a" style="left:5.00px;top:427.70px;white-space:nowrap;width:21.60px;text-align:center;font-size:8px;line-height:9px;color:#2a2a2a;transform:scaleX(0.86);transform-origin:50% 0">208</div>
<div class="a" style="left:5.00px;top:438.32px;white-space:nowrap;width:21.60px;text-align:center;font-size:8px;line-height:9px;color:#2a2a2a;transform:scaleX(0.86);transform-origin:50% 0">209</div>
<div class="a" style="left:5.00px;top:448.94px;white-space:nowrap;width:21.60px;text-align:center;font-size:8px;line-height:9px;color:#2a2a2a;transform:scaleX(0.86);transform-origin:50% 0">210</div>
<div class="a" style="left:5.00px;top:459.56px;white-space:nowrap;width:21.60px;text-align:center;font-size:8px;line-height:9px;color:#2a2a2a;transform:scaleX(0.86);transform-origin:50% 0">211</div>
<svg class="a" style="left:44.5px;top:223.2px" width="25" height="3"><path d="M0 2 Q1 0 2 2 T4 2 T6 2 T8 2 T10 2 T12 2 T14 2 T16 2 T18 2 T20 2 T22 2 T24 2" fill="none" stroke="#e03030" stroke-width="0.8"/></svg>
<svg class="a" style="left:29px;top:244.2px" width="36" height="3"><path d="M0 2 Q1 0 2 2 T4 2 T6 2 T8 2 T10 2 T12 2 T14 2 T16 2 T18 2 T20 2 T22 2 T24 2 T26 2 T28 2 T30 2 T32 2 T34 2" fill="none" stroke="#e03030" stroke-width="0.8"/></svg>
<svg class="a" style="left:87.8px;top:239.4px" width="3" height="4"><path d="M0 0 L2.7 1.7 L0 3.5z" fill="#a01020"/></svg>
<div class="a" style="left:315.30px;top:341.14px;width:45.40px;height:12.12px;border:2px solid #111;background:transparent"></div>
<div class="a" style="left:358.90px;top:351.96px;width:3.20px;height:3.20px;background:#111"></div>
<div class="a" style="left:27.20px;top:374.00px;width:357.50px;height:76.00px;background:#fff"></div>
<div class="a" style="left:155.00px;top:386.20px;white-space:nowrap;font-size:9.6px;line-height:12px;color:#3a3a3a;transform:scaleY(1.1);transform-origin:0 0">Downloads Per Country</div>
<div class="a" style="left:70.75px;top:410.30px;width:302.05px;height:1.00px;background:#c8c8c8"></div>
<div class="a" style="left:20.00px;top:405.20px;white-space:nowrap;width:47.5px;text-align:right;font-size:8.6px;line-height:10px;color:#2a2a2a;transform:scaleX(0.86);transform-origin:100% 0">5,000,000</div>
<div class="a" style="left:70.75px;top:425.50px;width:302.05px;height:1.00px;background:#c8c8c8"></div>
<div class="a" style="left:20.00px;top:420.40px;white-space:nowrap;width:47.5px;text-align:right;font-size:8.6px;line-height:10px;color:#2a2a2a;transform:scaleX(0.86);transform-origin:100% 0">4,000,000</div>
<div class="a" style="left:70.75px;top:440.70px;width:302.05px;height:1.00px;background:#c8c8c8"></div>
<div class="a" style="left:20.00px;top:435.60px;white-space:nowrap;width:47.5px;text-align:right;font-size:8.6px;line-height:10px;color:#2a2a2a;transform:scaleX(0.86);transform-origin:100% 0">3,000,000</div>
<div class="a" style="left:73.25px;top:410.80px;width:1.00px;height:40.00px;background:#c8c8c8"></div>
<div class="a" style="left:372.30px;top:410.80px;width:1.00px;height:40.00px;background:#c8c8c8"></div>
<div class="a" style="left:246.00px;top:432.50px;width:9.50px;height:17.50px;background:#0e4a94"></div>
<div class="a" style="left:302.00px;top:439.00px;width:9.50px;height:11.00px;background:#0e4a94"></div>
<div class="a" style="left:358.00px;top:417.50px;width:9.50px;height:32.50px;background:#0e4a94"></div>
<div class="a" style="left:540.00px;top:158.60px;width:10.00px;height:291.40px;background:#f0f0f0"></div>
<svg class="a" style="left:541.5px;top:162.5px" width="7" height="5"><path d="M0.5 4 L3.5 1 L6.5 4" fill="none" stroke="#555" stroke-width="1.2"/></svg>
<div class="a" style="left:541.10px;top:428.90px;width:8.90px;height:21.10px;background:#cacaca"></div>
<div class="a" style="left:550.00px;top:138.50px;width:6.00px;height:311.50px;background:#f2f2f2"></div>
<div class="a" style="left:555.50px;top:138.50px;width:1.00px;height:311.50px;background:#cdcdcd"></div>
<svg class="a" style="left:552.5px;top:325px" width="2" height="22" viewBox="0 0 2 22"><rect x="0" y="0" width="1.2" height="1" fill="#a0a0a0"/><rect x="0" y="2" width="1.2" height="1" fill="#a0a0a0"/><rect x="0" y="4" width="1.2" height="1" fill="#a0a0a0"/><rect x="0" y="6" width="1.2" height="1" fill="#a0a0a0"/><rect x="0" y="8" width="1.2" height="1" fill="#a0a0a0"/><rect x="0" y="10" width="1.2" height="1" fill="#a0a0a0"/><rect x="0" y="12" width="1.2" height="1" fill="#a0a0a0"/><rect x="0" y="14" width="1.2" height="1" fill="#a0a0a0"/><rect x="0" y="16" width="1.2" height="1" fill="#a0a0a0"/><rect x="0" y="18" width="1.2" height="1" fill="#a0a0a0"/><rect x="0" y="20" width="1.2" height="1" fill="#a0a0a0"/></svg>
<div class="a" style="left:556.50px;top:138.50px;width:138.00px;height:311.50px;background:#f0f0f0"></div>
<div class="a" style="left:557.50px;top:138.50px;width:1.00px;height:311.50px;background:#fafafa"></div>
<div class="a" style="left:694.50px;top:138.50px;width:23.80px;height:311.50px;background:linear-gradient(90deg,#f0f0f0 70%,#f8f8f8);border-left:1px solid #d8d8d8"></div>
<div class="a" style="left:718.30px;top:138.50px;width:1.70px;height:311.50px;background:#05abf2"></div>
<div class="a" style="left:563.90px;top:144.60px;white-space:nowrap;font-size:7.5px;line-height:10px;font-weight:bold;-webkit-text-stroke:0.2px #111;color:#1a1a1a;letter-spacing:-0.05px;">Properties</div>
<svg class="a" style="left:684.5px;top:145.2px" width="6" height="6" viewBox="0 0 6 6"><path d="M0.5 0.5 L5.5 5.5 M5.5 0.5 L0.5 5.5" stroke="#333" stroke-width="1.2"/></svg>
<div class="a" style="left:558.50px;top:157.00px;width:134.50px;height:15.50px;background:linear-gradient(#dedede,#ececec 60%,#f0f0f0)"></div>
<svg class="a" style="left:561px;top:162.6px" width="6" height="6" viewBox="0 0 6 6"><rect x="0.5" y="0.5" width="5" height="5" fill="#f4f4f4" stroke="#6a7a8a" stroke-width="0.8"/><path d="M1.5 3h3" stroke="#333" stroke-width="0.8"/></svg>
<div class="a" style="left:569.90px;top:161.14px;white-space:nowrap;font-size:7.4px;line-height:10px;font-weight:bold;-webkit-text-stroke:0.2px #111;color:#1a1a1a;letter-spacing:-0.1px;">Text</div>
<svg class="a" style="left:683px;top:161px" width="7" height="6.5" viewBox="0 0 7 6.5"><rect x="0.5" y="0.5" width="6" height="5.5" fill="#eaf2fa" stroke="#3a7ac0" stroke-width="0.9"/><path d="M1.5 4h4" stroke="#3a7ac0" stroke-width="0.8"/></svg>
<div class="a" style="left:558.50px;top:242.00px;width:134.50px;height:15.00px;background:linear-gradient(#dedede,#ececec 60%,#f0f0f0)"></div>
<svg class="a" style="left:561px;top:247.6px" width="6" height="6" viewBox="0 0 6 6"><rect x="0.5" y="0.5" width="5" height="5" fill="#f4f4f4" stroke="#6a7a8a" stroke-width="0.8"/><path d="M1.5 3h3" stroke="#333" stroke-width="0.8"/></svg>
<div class="a" style="left:569.90px;top:246.14px;white-space:nowrap;font-size:7.4px;line-height:10px;font-weight:bold;-webkit-text-stroke:0.2px #111;color:#1a1a1a;letter-spacing:-0.1px;">Alignment</div>
<svg class="a" style="left:683px;top:246px" width="7" height="6.5" viewBox="0 0 7 6.5"><rect x="0.5" y="0.5" width="6" height="5.5" fill="#eaf2fa" stroke="#3a7ac0" stroke-width="0.9"/><path d="M1.5 4h4" stroke="#3a7ac0" stroke-width="0.8"/></svg>
<div class="a" style="left:558.50px;top:368.30px;width:134.50px;height:15.20px;background:linear-gradient(#dedede,#ececec 60%,#f0f0f0)"></div>
<svg class="a" style="left:561px;top:373.90000000000003px" width="6" height="6" viewBox="0 0 6 6"><rect x="0.5" y="0.5" width="5" height="5" fill="#f4f4f4" stroke="#6a7a8a" stroke-width="0.8"/><path d="M1.5 3h3" stroke="#333" stroke-width="0.8"/></svg>
<div class="a" style="left:569.90px;top:372.44px;white-space:nowrap;font-size:7.4px;line-height:10px;font-weight:bold;-webkit-text-stroke:0.2px #111;color:#1a1a1a;letter-spacing:-0.1px;">Cell Appearance</div>
<svg class="a" style="left:683px;top:372.3px" width="7" height="6.5" viewBox="0 0 7 6.5"><rect x="0.5" y="0.5" width="6" height="5.5" fill="#eaf2fa" stroke="#3a7ac0" stroke-width="0.9"/><path d="M1.5 4h4" stroke="#3a7ac0" stroke-width="0.8"/></svg>
<div class="a" style="left:561.80px;top:174.40px;width:90.40px;height:15.20px;background:#fff;border:1px solid #c6c6c6"></div>
<div class="a" style="left:641.30px;top:175.40px;width:10.00px;height:13.20px;background:#e2e2e2;border-left:1px solid #c6c6c6"></div>
<svg class="a" style="left:643px;top:180px" width="7" height="5" viewBox="0 0 7 5"><path d="M0.5 0.5 L3.5 3.5 L6.5 0.5" fill="none" stroke="#444" stroke-width="1.2"/></svg>
<div class="a" style="left:564.00px;top:178.20px;white-space:nowrap;font-size:8.2px;color:#111;line-height:10px">Arial</div>
<div class="a" style="left:655.60px;top:174.40px;width:32.00px;height:15.20px;background:#fff;border:1px solid #c6c6c6"></div>
<div class="a" style="left:676.50px;top:175.40px;width:10.50px;height:13.20px;background:#e2e2e2;border-left:1px solid #c6c6c6"></div>
<svg class="a" style="left:678.3px;top:180px" width="7" height="5" viewBox="0 0 7 5"><path d="M0.5 0.5 L3.5 3.5 L6.5 0.5" fill="none" stroke="#444" stroke-width="1.2"/></svg>
<div class="a" style="left:657.50px;top:178.20px;white-space:nowrap;font-size:8.2px;color:#111;line-height:10px">10</div>
<div class="a" style="left:563.00px;top:195.00px;width:85.40px;height:18.60px;background:#fbfbfb"></div>
<div class="a" style="left:567.30px;top:198.50px;white-space:nowrap;font-size:10.5px;font-weight:bold;color:#1a3a5a;line-height:12px">B</div>
<div class="a" style="left:583.50px;top:198.50px;white-space:nowrap;font-size:10.5px;font-weight:bold;font-style:italic;color:#1a3a5a;line-height:12px">I</div>
<div class="a" style="left:597.50px;top:198.50px;white-space:nowrap;font-size:10px;color:#1a3a5a;line-height:12px;text-decoration:underline">U</div>
<svg class="a" style="left:610px;top:203px" width="5" height="3" viewBox="0 0 5 3"><path d="M0 0 L5 0 L2.5 3 Z" fill="#333"/></svg>
<div class="a" style="left:618.50px;top:201.00px;white-space:nowrap;font-size:4.6px;font-weight:bold;color:#333;line-height:6px;text-decoration:line-through">ABC</div>
<svg class="a" style="left:633px;top:198px" width="12" height="12" viewBox="0 0 12 12"><text x="0" y="10" font-size="10" font-weight="bold" fill="#2a6aa0" font-family="Liberation Sans">A</text><text x="3" y="11.5" font-size="9" fill="#9ab" font-family="Liberation Sans" opacity="0.7">A</text></svg>
<div class="a" style="left:656.40px;top:195.00px;width:32.00px;height:18.60px;background:#fbfbfb"></div>
<svg class="a" style="left:658.5px;top:197px" width="11" height="13" viewBox="0 0 11 13"><rect x="0" y="3" width="2" height="9" fill="#8a9aaa"/><text x="2" y="12" font-size="9" font-weight="bold" fill="#2a6aa0" font-family="Liberation Sans">A</text><circle cx="8" cy="3" r="2" fill="#e86030"/></svg>
<svg class="a" style="left:673.5px;top:197px" width="11" height="13" viewBox="0 0 11 13"><rect x="0" y="3" width="2" height="9" fill="#8a9aaa"/><text x="2" y="12" font-size="9" font-weight="bold" fill="#2a6aa0" font-family="Liberation Sans">A</text><path d="M6 2 L8 4.5 L10 2z" fill="#e86030"/></svg>
<div class="a" style="left:563.00px;top:222.40px;width:31.00px;height:16.90px;background:#f9f9f9"></div>
<svg class="a" style="left:566px;top:224px" width="10" height="12" viewBox="0 0 10 12"><text x="0" y="10" font-size="9" fill="#c8c8c8" font-family="Liberation Sans">A</text><path d="M1 1h6" stroke="#ccc"/></svg>
<svg class="a" style="left:579px;top:224px" width="10" height="12" viewBox="0 0 10 12"><text x="0" y="10" font-size="9" fill="#c8c8c8" font-family="Liberation Sans">A</text><path d="M1 1h6" stroke="#ccc"/></svg>
<div class="a" style="left:600.30px;top:222.40px;width:24.00px;height:16.90px;background:#f9f9f9"></div>
<svg class="a" style="left:603px;top:224px" width="10" height="12" viewBox="0 0 10 12"><text x="0" y="10" font-size="8" fill="#cfcfcf" font-family="Liberation Sans">W</text></svg>
<svg class="a" style="left:615.5px;top:229px" width="5" height="3" viewBox="0 0 5 3"><path d="M0 0 L5 0 L2.5 3 Z" fill="#c4c4c4"/></svg>
<div class="a" style="left:636.90px;top:222.40px;width:23.10px;height:16.90px;background:#f9f9f9"></div>
<svg class="a" style="left:639px;top:224px" width="11" height="12" viewBox="0 0 11 12"><path d="M2 9 L5.5 0.5 L9 9z" fill="#1a4a7a"/><path d="M4 6h3" stroke="#fff" stroke-width="1"/><rect x="0" y="9" width="11" height="2.5" fill="#1a3a5a"/></svg>
<svg class="a" style="left:653.5px;top:229px" width="5" height="3" viewBox="0 0 5 3"><path d="M0 0 L5 0 L2.5 3 Z" fill="#333"/></svg>
<div class="a" style="left:561.20px;top:258.90px;width:63.10px;height:18.70px;background:#fbfbfb"></div>
<svg class="a" style="left:565px;top:263.3px" width="9" height="9.5" viewBox="0 0 9 9.5"><rect x="0" y="0" width="9" height="1.8" fill="#7f9fc6"/><rect x="0" y="2.4" width="7" height="1.8" fill="#7f9fc6"/><rect x="0" y="4.8" width="9" height="1.8" fill="#7f9fc6"/><rect x="0" y="7.2" width="7" height="1.8" fill="#7f9fc6"/></svg>
<svg class="a" style="left:580.5px;top:263.3px" width="9" height="9.5" viewBox="0 0 9 9.5"><rect x="0.0" y="0" width="9" height="1.8" fill="#7f9fc6"/><rect x="1.0" y="2.4" width="7" height="1.8" fill="#7f9fc6"/><rect x="0.0" y="4.8" width="9" height="1.8" fill="#7f9fc6"/><rect x="1.0" y="7.2" width="7" height="1.8" fill="#7f9fc6"/></svg>
<svg class="a" style="left:595.7px;top:263.3px" width="9" height="9.5" viewBox="0 0 9 9.5"><rect x="0" y="0" width="9" height="1.8" fill="#7f9fc6"/><rect x="2" y="2.4" width="7" height="1.8" fill="#7f9fc6"/><rect x="0" y="4.8" width="9" height="1.8" fill="#7f9fc6"/><rect x="2" y="7.2" width="7" height="1.8" fill="#7f9fc6"/></svg>
<svg class="a" style="left:611.5px;top:263.3px" width="9" height="9.5" viewBox="0 0 9 9.5"><rect x="0" y="0" width="9" height="1.8" fill="#7f9fc6"/><rect x="0" y="2.4" width="9" height="1.8" fill="#7f9fc6"/><rect x="0" y="4.8" width="9" height="1.8" fill="#7f9fc6"/><rect x="0" y="7.2" width="9" height="1.8" fill="#7f9fc6"/></svg>
<div class="a" style="left:637.00px;top:258.90px;width:47.00px;height:18.70px;background:#fbfbfb"></div>
<svg class="a" style="left:639.7px;top:263.3px" width="9" height="4" viewBox="0 0 9 4"><rect x="0" y="0" width="9" height="1.6" fill="#7a9ac0"/><rect x="1.5" y="2.3" width="6" height="1.4" fill="#9ab4d0"/></svg>
<svg class="a" style="left:655.3px;top:266.4px" width="9" height="4" viewBox="0 0 9 4"><rect x="0" y="0" width="9" height="1.6" fill="#7a9ac0"/><rect x="1.5" y="2.3" width="6" height="1.4" fill="#9ab4d0"/></svg>
<div class="a" style="left:668.00px;top:259.80px;width:16.00px;height:17.00px;background:#c6e0f6;border:1px solid #6aaee8"></div>
<svg class="a" style="left:671.5px;top:269.3px" width="9" height="4" viewBox="0 0 9 4"><rect x="0" y="0" width="9" height="1.6" fill="#7a9ac0"/><rect x="1.5" y="2.3" width="6" height="1.4" fill="#9ab4d0"/></svg>
<div class="a" style="left:562.00px;top:284.37px;white-space:nowrap;font-size:7.6px;line-height:10px;-webkit-text-stroke:0.1px currentColor;color:#a8a8a8;letter-spacing:-0.1px;">Left <u>i</u>ndent:</div>
<div class="a" style="left:562.00px;top:296.40px;width:56.60px;height:13.80px;background:#f6f8fb;border:1px solid #a9c4e2"></div>
<div class="a" style="left:565.00px;top:298.60px;white-space:nowrap;font-size:7.8px;color:#b0b0b0;line-height:10px">0pt</div>
<svg class="a" style="left:609.5px;top:298px" width="6" height="10" viewBox="0 0 6 10"><path d="M0.5 3.5 L3 1 L5.5 3.5 M0.5 6.5 L3 9 L5.5 6.5" fill="none" stroke="#555" stroke-width="1"/></svg>
<div class="a" style="left:629.80px;top:286.20px;width:8.20px;height:8.40px;background:#fff;border:1px solid #555"></div>
<svg class="a" style="left:630.5px;top:287px" width="7" height="7" viewBox="0 0 7 7"><path d="M0.8 3.5 L2.8 5.6 L6.3 0.8" fill="none" stroke="#111" stroke-width="1.5"/></svg>
<div class="a" style="left:640.40px;top:286.37px;white-space:nowrap;font-size:7.6px;line-height:10px;-webkit-text-stroke:0.1px currentColor;color:#1a1a1a;letter-spacing:-0.1px;"><u>W</u>rap text</div>
<div class="a" style="left:629.80px;top:303.20px;width:8.20px;height:8.40px;background:#f4f4f4;border:1px solid #d0d0d0"></div>
<div class="a" style="left:640.20px;top:302.87px;white-space:nowrap;font-size:7.6px;line-height:10px;-webkit-text-stroke:0.1px currentColor;color:#b4b4b4;letter-spacing:-0.1px;">M<u>e</u>rge cells</div>
<div class="a" style="left:562.00px;top:315.87px;white-space:nowrap;font-size:7.6px;line-height:10px;-webkit-text-stroke:0.1px currentColor;color:#1a1a1a;letter-spacing:-0.1px;">Text <u>o</u>rientation:</div>
<svg class="a" style="left:561px;top:329px" width="33" height="33" viewBox="0 0 33 33"><circle cx="16.2" cy="16" r="15.2" fill="#f8f8f8" stroke="#7a9cc4" stroke-width="1"/><path d="M16 16 H31.4" stroke="#5a7aa4" stroke-width="1"/><circle cx="16" cy="16" r="1.1" fill="#2a4a7a"/></svg>
<div class="a" style="left:604.40px;top:333.30px;width:82.30px;height:14.30px;background:#fff;border:1px solid #c6c6c6"></div>
<div class="a" style="left:675.00px;top:334.30px;width:10.70px;height:12.30px;background:#e2e2e2;border-left:1px solid #c6c6c6"></div>
<svg class="a" style="left:677px;top:338.5px" width="7" height="5" viewBox="0 0 7 5"><path d="M0.5 0.5 L3.5 3.5 L6.5 0.5" fill="none" stroke="#444" stroke-width="1.2"/></svg>
<div class="a" style="left:607.00px;top:335.67px;white-space:nowrap;font-size:7.6px;line-height:10px;-webkit-text-stroke:0.1px currentColor;color:#1a1a1a;letter-spacing:-0.1px;">0 degrees</div>
<div class="a" style="left:604.30px;top:356.20px;width:8.20px;height:8.00px;background:#fff;border:1px solid #555"></div>
<div class="a" style="left:614.00px;top:355.37px;white-space:nowrap;font-size:7.6px;line-height:10px;-webkit-text-stroke:0.1px currentColor;color:#1a1a1a;letter-spacing:-0.1px;"><u>V</u>ertically stacked</div>
<div class="a" style="left:562.00px;top:386.17px;white-space:nowrap;font-size:7.6px;line-height:10px;-webkit-text-stroke:0.1px currentColor;color:#1a1a1a;letter-spacing:-0.1px;"><u>C</u>ell background:</div>
<div class="a" style="left:563.90px;top:397.80px;width:57.80px;height:15.50px;background:#fbfbfb"></div>
<svg class="a" style="left:566px;top:400px" width="10" height="10" viewBox="0 0 10 10"><path d="M1 4 L5 0.8 L9.5 5 L5.5 9z" fill="#3a8ad8" stroke="#1a4a8a" stroke-width="0.9"/><path d="M2 3.5 Q0 6 2 8" fill="none" stroke="#1a4a8a" stroke-width="0.9"/></svg>
<div class="a" style="left:576.10px;top:401.10px;width:34.50px;height:7.80px;background:#d3ead1;border:1px solid #4a6a8a"></div>
<svg class="a" style="left:615px;top:404px" width="5" height="3" viewBox="0 0 5 3"><path d="M0 0 L5 0 L2.5 3 Z" fill="#333"/></svg>
<div class="a" style="left:562.00px;top:421.87px;white-space:nowrap;font-size:7.6px;line-height:10px;-webkit-text-stroke:0.1px currentColor;color:#1a1a1a;letter-spacing:-0.1px;">Cell <u>b</u>order:</div>
<div class="a" style="left:563.00px;top:432.20px;width:37.60px;height:18.00px;background:#fbfbfb"></div>
<svg class="a" style="left:565px;top:436px" width="27" height="14" viewBox="0 0 27 14"><rect x="0.5" y="0.5" width="26" height="14" fill="#fff" stroke="#a8c0dc" stroke-width="0.8" stroke-dasharray="1,1"/><path d="M13.5 0.5 V15" stroke="#a8c0dc" stroke-width="0.8" stroke-dasharray="1,1"/></svg>
<div class="a" style="left:594.50px;top:446.50px;width:3.00px;height:3.50px;background:#222"></div>
<div class="a" style="left:607.20px;top:432.20px;width:62.00px;height:18.00px;background:#fbfbfb"></div>
<div class="a" style="left:611.00px;top:440.00px;width:50.00px;height:0.80px;background:#a8a8a8"></div>
<svg class="a" style="left:663.3px;top:439px" width="5" height="3" viewBox="0 0 5 3"><path d="M0 0 L5 0 L2.5 3 Z" fill="#888"/></svg>
<svg class="a" style="left:704px;top:147px" width="6" height="7" viewBox="0 0 6 7"><path d="M0.5 0.5h3v3h-3z M2.5 3 L5.5 6" fill="#555" stroke="#555" stroke-width="0.8"/></svg>
<div class="a" style="left:696.90px;top:164.70px;width:18.40px;height:18.90px;background:#f0f0f0;border:1px solid #cfcfcf;border-radius:2px;box-shadow:inset 0 0 0 1px #fff"></div>
<svg class="a" style="left:700px;top:168px" width="12" height="13" viewBox="0 0 12 13"><rect x="0.5" y="1" width="5" height="5" fill="#2a8ad8"/><rect x="5.5" y="0.5" width="5.5" height="5" fill="#25b840"/><rect x="0.5" y="6" width="5" height="5.5" fill="#1ab0e0"/><rect x="5.5" y="6" width="5.5" height="5.5" fill="#38c830"/><path d="M3 1v11M8.3 0.5v11" stroke="#fff" stroke-width="0.4" opacity="0.6"/></svg>
<svg class="a" style="left:700px;top:188.7px" width="13" height="15" viewBox="0 0 13 15"><circle cx="3" cy="3" r="1.8" fill="#f060a0"/><circle cx="10" cy="2.5" r="1.8" fill="#f0c030"/><circle cx="12" cy="7" r="1.5" fill="#e04060"/><circle cx="1.5" cy="9" r="1.5" fill="#40b0e0"/><path d="M3 13 L6 4 L10 9 L8 13z" fill="#1a4a8a"/><path d="M6 4 L10 9 L7.5 8z" fill="#20a0e0"/></svg>
<svg class="a" style="left:700px;top:211.3px" width="13" height="12.5" viewBox="0 0 13 12.5"><rect x="1" y="2" width="11" height="9" fill="#f8f8f8" stroke="#8aa" stroke-width="0.8" transform="rotate(-12 6 6)"/><rect x="2.5" y="3.5" width="8" height="6" fill="#5ab8e8" transform="rotate(-12 6 6)"/><path d="M2.5 10 L6 6 L10 9z" fill="#50a030"/></svg>
<svg class="a" style="left:699.4px;top:231.5px" width="14" height="15" viewBox="0 0 14 15"><circle cx="7" cy="7.5" r="6" fill="#fff" stroke="#f0a020" stroke-width="1.6"/><path d="M10 4.5 L7.8 8.3 L4 10.5 L6.2 6.7z" fill="#e03020"/><path d="M7.8 8.3 L4 10.5 L6.2 6.7z" fill="#2a6ad0"/></svg>
<svg class="a" style="left:699.5px;top:253.3px" width="14" height="14" viewBox="0 0 14 14"><path d="M4 0.5 H12 L13.5 2 V13.5 H4z" fill="#eaf4fc" stroke="#3a9ad8" stroke-width="0.9"/><text x="0" y="11.5" font-size="11" font-style="italic" fill="#1a3a6a" font-family="Liberation Serif">f</text><text x="5.5" y="12" font-size="8" font-style="italic" fill="#1a3a6a" font-family="Liberation Serif">x</text></svg>
</body></html>
